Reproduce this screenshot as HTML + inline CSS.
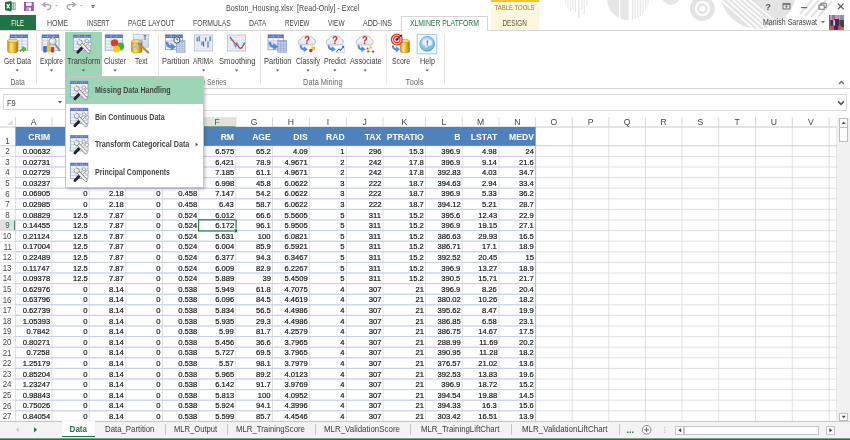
<!DOCTYPE html>
<html lang="en"><head><meta charset="utf-8"><title>Boston_Housing.xlsx [Read-Only] - Excel</title>
<style>
html,body{margin:0;padding:0;}
body{width:850px;height:440px;overflow:hidden;background:#fff;position:relative;font-family:"Liberation Sans",sans-serif;}
#root{position:absolute;left:0;top:0;width:850px;height:440px;overflow:hidden;will-change:transform;}
.t{position:absolute;white-space:pre;display:block;}
.b{position:absolute;box-sizing:border-box;}
svg{position:absolute;overflow:visible;}
</style></head><body><div id="root">
<svg style="left:540px;top:0" width="310" height="30" viewBox="540 0 310 30">
<defs><clipPath id="semi"><circle cx="628" cy="-1" r="21"/></clipPath><clipPath id="bigc"><circle cx="758" cy="-9" r="38"/></clipPath></defs>
<g fill="#e6e6e6" stroke="none">
<rect x="565.2" y="0" width="1" height="4"/><rect x="567.6" y="0" width="1" height="7.5"/><rect x="570" y="0" width="1.1" height="11.5"/>
<rect x="572.4" y="0" width="1.1" height="9"/><rect x="574.8" y="0" width="1.2" height="12.5"/><rect x="578" y="0" width="1.4" height="17.5"/>
<rect x="581" y="0" width="1.2" height="10"/><rect x="583.6" y="0" width="1.2" height="14"/><rect x="586.4" y="0" width="1" height="6"/>
<g clip-path="url(#semi)">
<path d="M594 0 L599.6 0 L607.2 9 L607.2 0 L619 0 L619 22 L606 22 L594 8 Z"/>
<rect x="620.4" y="0" width="8.2" height="22"/>
<rect x="632" y="0" width="1.3" height="22"/><rect x="634.6" y="0" width="1.3" height="22"/><rect x="637.2" y="0" width="1.3" height="22"/><rect x="639.8" y="0" width="1.3" height="22"/>
<rect x="642.4" y="0" width="1.3" height="22"/><rect x="645" y="0" width="1.3" height="22"/><rect x="647.6" y="0" width="1.3" height="22"/>
</g>
<circle cx="671" cy="-4" r="9"/>
</g>
<g fill="none" stroke="#e4e4e4">
<circle cx="702.4" cy="8.6" r="10" stroke-width="4.8"/>
<circle cx="702.4" cy="8.6" r="4.2" stroke-width="2.6"/>
</g>
<g clip-path="url(#bigc)">
<rect x="715" y="0" width="90" height="30" fill="#e4e4e4"/>
<g stroke="#fff" stroke-width="1.5" fill="none">
<path d="M721 0 L757 32"/><path d="M725 -2 L763 32"/><path d="M729.5 -3 L769 32"/><path d="M734.5 -3 L775 32"/><path d="M740 -3 L781 32"/><path d="M746 -3 L787 31"/>
</g>
</g>
<g stroke="#e4e4e4" stroke-width="2" fill="none">
<path d="M800 14 L812 0"/><path d="M805 16 L819 0"/><path d="M811 17 L826 0"/><path d="M818 17 L832 1"/>
</g>
</svg>
<svg style="left:5.2px;top:0.8px" width="11" height="10.4" viewBox="0 0 11 10.4">
<rect x="5.6" y="1.5" width="5" height="7.2" fill="#5f9d7a"/>
<rect x="7.3" y="2.4" width="0.9" height="5.4" fill="#e7f1eb"/><rect x="9" y="2.4" width="0.9" height="5.4" fill="#e7f1eb"/>
<path d="M0 1.1 L6.5 0 L6.5 10.4 L0 9.3 Z" fill="#1e6f42"/>
<path d="M1.7 3.2 L4.7 7.3 M4.7 3.2 L1.7 7.3" stroke="#fff" stroke-width="1.15" fill="none"/>
</svg>
<svg style="left:24px;top:2px" width="10" height="9" viewBox="0 0 10 9">
<rect x="0.3" y="0.3" width="9" height="8.4" fill="#9559b8" stroke="#7e3f9f" stroke-width="0.6"/>
<rect x="2" y="0.6" width="5.6" height="3.2" fill="#fff"/>
<rect x="2.6" y="5.6" width="4.4" height="3" fill="#fff"/><rect x="3.4" y="6.2" width="1.2" height="2.4" fill="#7e3f9f"/>
</svg>
<svg style="left:41px;top:1px" width="60" height="11" viewBox="41 1 60 11">
<g fill="none" stroke="#a6a6a6" stroke-width="1.35">
<path d="M43 4.6 L48 4.6 Q51 4.8 50.8 7 Q50.4 9.4 47.2 9.6"/><path d="M45.4 2.2 L42.6 4.6 L45.6 6.9"/>
<path d="M75 4.6 L70 4.6 Q67 4.8 67.2 7 Q67.6 9.4 70.8 9.6"/><path d="M72.6 2.2 L75.4 4.6 L72.4 6.9"/>
</g>
<path d="M55 5 L57.8 5 L56.4 6.6 Z" fill="#b0b0b0"/><path d="M80 4.9 L82.8 4.9 L81.4 6.5 Z" fill="#b0b0b0"/>
<rect x="91.3" y="5" width="3.4" height="0.8" fill="#555"/><path d="M91.2 6.5 L94.8 6.5 L93 8.2 Z" fill="#555"/>
</svg>
<span class="t" style="left:225.80px;top:2.76px;font-size:8.4px;line-height:10.08px;color:#4a4a4a;transform:scaleX(0.8581);transform-origin:0 50%;">Boston_Housing.xlsx  [Read-Only] - Excel</span>
<span class="t" style="left:765.13px;top:1.06px;font-size:9.4px;line-height:11.28px;color:#555;font-weight:700;">?</span>
<svg style="left:780px;top:0" width="70" height="14" viewBox="780 0 70 14">
<g fill="none" stroke="#666" stroke-width="0.9">
<rect x="783" y="3.4" width="7" height="5.6"/><path d="M783 4.6 L790 4.6"/><path d="M786.5 8 L786.5 5.6 M785.3 6.8 L786.5 5.6 L787.7 6.8" stroke-width="0.7"/>
<path d="M801.2 7.6 L807.2 7.6" stroke-width="1.2"/>
<rect x="819" y="5" width="5.2" height="4.2"/><path d="M820.8 5 L820.8 3.2 L826.2 3.2 L826.2 7.4 L824.2 7.4"/>
<path d="M837.8 3.6 L843.6 9.2 M843.6 3.6 L837.8 9.2" stroke-width="1.2" stroke="#5a5a5a"/>
</g></svg>
<div class="b" style="left:0.00px;top:15.00px;width:36.00px;height:15.60px;background:#217346;"></div>
<span class="t" style="left:9.34px;top:18.58px;font-size:8.2px;line-height:9.84px;color:#fff;transform:scaleX(0.7276);transform-origin:50% 50%;">FILE</span>
<span class="t" style="left:47.00px;top:18.58px;font-size:8.2px;line-height:9.84px;color:#444;transform:scaleX(0.8537);transform-origin:0 50%;">HOME</span>
<span class="t" style="left:86.80px;top:18.58px;font-size:8.2px;line-height:9.84px;color:#444;transform:scaleX(0.7520);transform-origin:0 50%;">INSERT</span>
<span class="t" style="left:127.50px;top:18.58px;font-size:8.2px;line-height:9.84px;color:#444;transform:scaleX(0.8260);transform-origin:0 50%;">PAGE LAYOUT</span>
<span class="t" style="left:192.50px;top:18.58px;font-size:8.2px;line-height:9.84px;color:#444;transform:scaleX(0.8297);transform-origin:0 50%;">FORMULAS</span>
<span class="t" style="left:248.80px;top:18.58px;font-size:8.2px;line-height:9.84px;color:#444;transform:scaleX(0.8474);transform-origin:0 50%;">DATA</span>
<span class="t" style="left:284.50px;top:18.58px;font-size:8.2px;line-height:9.84px;color:#444;transform:scaleX(0.7574);transform-origin:0 50%;">REVIEW</span>
<span class="t" style="left:327.50px;top:18.58px;font-size:8.2px;line-height:9.84px;color:#444;transform:scaleX(0.7873);transform-origin:0 50%;">VIEW</span>
<span class="t" style="left:362.50px;top:18.58px;font-size:8.2px;line-height:9.84px;color:#444;transform:scaleX(0.8602);transform-origin:0 50%;">ADD-INS</span>
<div class="b" style="left:0.00px;top:30.20px;width:850.00px;height:1.00px;background:#d6d6d6;"></div>
<div class="b" style="left:490.80px;top:0.00px;width:47.80px;height:30.20px;background:#fdf7e0;"></div>
<div class="b" style="left:490.80px;top:0.00px;width:47.80px;height:2.00px;background:#f3c42f;"></div>
<span class="t" style="left:489.14px;top:3.04px;font-size:7.6px;line-height:9.12px;color:#9a7a1c;transform:scaleX(0.7826);transform-origin:50% 50%;">TABLE TOOLS</span>
<span class="t" style="left:498.58px;top:18.58px;font-size:8.2px;line-height:9.84px;color:#5a5336;transform:scaleX(0.7793);transform-origin:50% 50%;">DESIGN</span>
<div class="b" style="left:401.00px;top:15.60px;width:87.00px;height:15.80px;background:#fff;border:1px solid #d6d6d6;border-bottom:none;"></div>
<span class="t" style="left:410.00px;top:18.58px;font-size:8.2px;line-height:9.84px;color:#217346;transform:scaleX(0.8336);transform-origin:0 50%;">XLMINER PLATFORM</span>
<span class="t" style="left:762.70px;top:17.16px;font-size:8.4px;line-height:10.08px;color:#444;transform:scaleX(0.8413);transform-origin:0 50%;">Manish Saraswat</span>
<svg style="left:820px;top:20px" width="6" height="5" viewBox="0 0 6 5"><path d="M1 1 L5 1 L3 3.4 Z" fill="#777"/></svg>
<svg style="left:829px;top:14.8px;overflow:hidden" width="15" height="15" viewBox="0 0 15 15">
<defs><filter id="avb" x="-10%" y="-10%" width="120%" height="120%"><feGaussianBlur stdDeviation="0.45"/></filter></defs>
<rect width="15" height="15" fill="#a98aa2"/>
<g filter="url(#avb)">
<rect x="-1" y="-1" width="17" height="6" fill="#c39ab6"/>
<rect x="3" y="0" width="3" height="4.5" fill="#9a6f9a"/><rect x="7" y="0.5" width="3" height="3.5" fill="#d58aa8"/>
<rect x="11" y="-1" width="5" height="6" fill="#8f93ab"/>
<rect x="-1" y="-1" width="2" height="17" fill="#4f7f3c"/>
<rect x="1.4" y="5" width="3.4" height="6.5" fill="#3a3142"/>
<rect x="5" y="4" width="5" height="12" fill="#43256c"/>
<rect x="4.4" y="5.2" width="1.4" height="5.4" fill="#f6f2f6"/>
<rect x="10.4" y="5" width="5" height="7.5" fill="#3c4a3c"/>
<rect x="1.6" y="10.6" width="3.4" height="5" fill="#d6503a"/>
<rect x="9.2" y="10.6" width="2.8" height="5" fill="#d6503a"/>
<rect x="12" y="12" width="4" height="4" fill="#8a7f88"/>
</g>
</svg>
<div class="b" style="left:65.30px;top:32.00px;width:36.80px;height:43.60px;background:#9fd5b7;"></div>
<div class="b" style="left:0.00px;top:87.60px;width:850.00px;height:1.00px;background:#d6d6d6;"></div>
<div class="b" style="left:35.60px;top:33.50px;width:1.00px;height:50.50px;background:#e5e5e5;"></div>
<div class="b" style="left:157.80px;top:33.50px;width:1.00px;height:50.50px;background:#e5e5e5;"></div>
<div class="b" style="left:260.30px;top:33.50px;width:1.00px;height:50.50px;background:#e5e5e5;"></div>
<div class="b" style="left:385.50px;top:33.50px;width:1.00px;height:50.50px;background:#e5e5e5;"></div>
<div class="b" style="left:443.80px;top:33.50px;width:1.00px;height:50.50px;background:#e5e5e5;"></div>
<svg style="left:0;top:31px" width="460" height="60" viewBox="0 31 460 60"><defs><linearGradient id="gold" x1="0" x2="1" y1="0" y2="0"><stop offset="0" stop-color="#c98e12"/><stop offset="0.35" stop-color="#ffe680"/><stop offset="0.7" stop-color="#e2a91c"/><stop offset="1" stop-color="#a8740a"/></linearGradient><linearGradient id="cloudg" x1="0" x2="0" y1="0" y2="1"><stop offset="0" stop-color="#ffffff"/><stop offset="1" stop-color="#dfe3ea"/></linearGradient><linearGradient id="pageg" x1="0" x2="1" y1="0" y2="1"><stop offset="0" stop-color="#eef3fa"/><stop offset="1" stop-color="#c6d4e8"/></linearGradient><radialGradient id="lens" cx="0.4" cy="0.35" r="0.7"><stop offset="0" stop-color="#ffffff"/><stop offset="1" stop-color="#a9cdf0"/></radialGradient><radialGradient id="helpg" cx="0.4" cy="0.3" r="0.8"><stop offset="0" stop-color="#cfe8f8"/><stop offset="1" stop-color="#63a9dc"/></radialGradient></defs><rect x="10" y="34.8" width="17.8" height="15.4" fill="#f0f4fb" stroke="#7d93c4" stroke-width="0.7"/><rect x="10" y="34.8" width="17.8" height="3.2" fill="#5570bd"/><path d="M11 36.40 L26.8 36.40" stroke="#a9b8e2" stroke-width="0.7" stroke-dasharray="1.4 0.7"/><path d="M15.93 34.8 L15.93 50.199999999999996" stroke="#aabbdc" stroke-width="0.6"/><path d="M21.87 34.8 L21.87 50.199999999999996" stroke="#aabbdc" stroke-width="0.6"/><path d="M10 41.05 L27.8 41.05" stroke="#aabbdc" stroke-width="0.6"/><path d="M10 44.10 L27.8 44.10" stroke="#aabbdc" stroke-width="0.6"/><path d="M10 47.15 L27.8 47.15" stroke="#aabbdc" stroke-width="0.6"/><path d="M7.6 40.768 L7.6 51.232 A5.2 1.7680000000000002 0 0 0 18.0 51.232 L18.0 40.768 Z" fill="url(#gold)" stroke="#b07d10" stroke-width="0.5"/><ellipse cx="12.8" cy="40.768" rx="5.2" ry="1.7680000000000002" fill="#f7dc7a" stroke="#b07d10" stroke-width="0.5"/><path d="M20 52 Q20.4 48.6 23 48.4 L22.6 46.4 L26.4 48.8 L23.6 51.8 L23.4 50 Q21.4 50 20 52 Z" fill="#4fc22c" stroke="#2f8f17" stroke-width="0.4"/><rect x="42" y="34.8" width="17" height="15.4" fill="#f0f4fb" stroke="#7d93c4" stroke-width="0.7"/><rect x="42" y="34.8" width="17" height="3.2" fill="#5570bd"/><path d="M43 36.40 L58 36.40" stroke="#a9b8e2" stroke-width="0.7" stroke-dasharray="1.4 0.7"/><path d="M47.67 34.8 L47.67 50.199999999999996" stroke="#aabbdc" stroke-width="0.6"/><path d="M53.33 34.8 L53.33 50.199999999999996" stroke="#aabbdc" stroke-width="0.6"/><path d="M42 41.05 L59 41.05" stroke="#aabbdc" stroke-width="0.6"/><path d="M42 44.10 L59 44.10" stroke="#aabbdc" stroke-width="0.6"/><path d="M42 47.15 L59 47.15" stroke="#aabbdc" stroke-width="0.6"/><rect x="43.2" y="46" width="3.6" height="6.6" rx="0.8" fill="#3f6fc9"/><rect x="47" y="42.4" width="3.6" height="10.2" rx="0.8" fill="#f0c21c"/><rect x="50.8" y="47" width="3.4" height="5.6" rx="0.8" fill="#d4362c"/><path d="M55 44.4 L59.8 50.6" stroke="#8c8c8c" stroke-width="1.8" stroke-linecap="round"/><circle cx="52.6" cy="41.4" r="3.6" fill="url(#lens)" stroke="#9a9a9a" stroke-width="0.9"/><rect x="73.3" y="35" width="17.5" height="15.4" fill="#f0f4fb" stroke="#7d93c4" stroke-width="0.7"/><rect x="73.3" y="35" width="17.5" height="2.8" fill="#5570bd"/><path d="M74.3 36.40 L89.8 36.40" stroke="#a9b8e2" stroke-width="0.7" stroke-dasharray="1.4 0.7"/><path d="M79.13 35 L79.13 50.4" stroke="#aabbdc" stroke-width="0.6"/><path d="M84.97 35 L84.97 50.4" stroke="#aabbdc" stroke-width="0.6"/><path d="M73.3 40.95 L90.8 40.95" stroke="#aabbdc" stroke-width="0.6"/><path d="M73.3 44.10 L90.8 44.10" stroke="#aabbdc" stroke-width="0.6"/><path d="M73.3 47.25 L90.8 47.25" stroke="#aabbdc" stroke-width="0.6"/><g transform="translate(74.2 36.5) scale(1.0)"><path d="M13.6 5.6 L7 12.2" stroke="#8a8a8a" stroke-width="3" stroke-linecap="round"/><path d="M13.6 5.6 L7 12.2" stroke="#f4f4f4" stroke-width="1.9" stroke-linecap="round"/><path d="M7.4 11.8 L3.6 15.8" stroke="#222" stroke-width="2.8" stroke-linecap="round"/><path d="M6 6.4 L14.6 15.4" stroke="#777" stroke-width="3.4" stroke-linecap="round"/><path d="M6 6.4 L14.6 15.4" stroke="#f1f1f1" stroke-width="2.2" stroke-linecap="round"/><circle cx="5.4" cy="5.8" r="2.5" fill="#f1f1f1" stroke="#777" stroke-width="0.7"/><path d="M3.2 3.4 L5.6 5.8" stroke="#dfe6f3" stroke-width="1.6"/><circle cx="15.6" cy="7.6" r="1.7" fill="#f4f4f4" stroke="#888" stroke-width="0.6"/><circle cx="12.6" cy="4.4" r="1.6" fill="#f4f4f4" stroke="#888" stroke-width="0.6"/></g><rect x="105.2" y="34.8" width="17.6" height="15.4" fill="#f0f4fb" stroke="#7d93c4" stroke-width="0.7"/><rect x="105.2" y="34.8" width="17.6" height="3.2" fill="#5570bd"/><path d="M106.2 36.40 L121.80000000000001 36.40" stroke="#a9b8e2" stroke-width="0.7" stroke-dasharray="1.4 0.7"/><path d="M111.07 34.8 L111.07 50.199999999999996" stroke="#aabbdc" stroke-width="0.6"/><path d="M116.93 34.8 L116.93 50.199999999999996" stroke="#aabbdc" stroke-width="0.6"/><path d="M105.2 41.05 L122.80000000000001 41.05" stroke="#aabbdc" stroke-width="0.6"/><path d="M105.2 44.10 L122.80000000000001 44.10" stroke="#aabbdc" stroke-width="0.6"/><path d="M105.2 47.15 L122.80000000000001 47.15" stroke="#aabbdc" stroke-width="0.6"/><circle cx="114.6" cy="43" r="3.7" fill="#e23a24"/><circle cx="120.6" cy="46.2" r="3.6" fill="#3fb42c"/><circle cx="116.4" cy="49" r="3.5" fill="#f2cd1e"/><rect x="133.2" y="34.2" width="15.6" height="13" fill="url(#pageg)" stroke="#a3b4cd" stroke-width="0.6"/><path d="M143.6 35.6 L146.4 35.6 M145 35.6 L145 40" stroke="#555" stroke-width="0.8"/><path d="M131.5 41.402 L131.5 51.198 A5.3 1.802 0 0 0 142.1 51.198 L142.1 41.402 Z" fill="url(#gold)" stroke="#b07d10" stroke-width="0.5"/><ellipse cx="136.8" cy="41.402" rx="5.3" ry="1.802" fill="#f7dc7a" stroke="#b07d10" stroke-width="0.5"/><path d="M134.4 48 Q135.4 42 142.8 39.4 Q139 43.6 137.4 48.4 Z" fill="#a9c6ea" stroke="#7f9fca" stroke-width="0.4"/><path d="M138.8 43.8 L148.2 52.6" stroke="#b87a2a" stroke-width="2.1" stroke-linecap="round"/><path d="M138.8 43.8 L148.2 52.6" stroke="#e0b066" stroke-width="0.7" stroke-dasharray="0.8 0.8"/><rect x="165.4" y="34.8" width="17.2" height="14.8" fill="#f0f4fb" stroke="#7d93c4" stroke-width="0.7"/><rect x="165.4" y="34.8" width="17.2" height="3.2" fill="#5570bd"/><path d="M166.4 36.40 L181.6 36.40" stroke="#a9b8e2" stroke-width="0.7" stroke-dasharray="1.4 0.7"/><path d="M171.13 34.8 L171.13 49.599999999999994" stroke="#aabbdc" stroke-width="0.6"/><path d="M176.87 34.8 L176.87 49.599999999999994" stroke="#aabbdc" stroke-width="0.6"/><path d="M165.4 40.90 L182.6 40.90" stroke="#aabbdc" stroke-width="0.6"/><path d="M165.4 43.80 L182.6 43.80" stroke="#aabbdc" stroke-width="0.6"/><path d="M165.4 46.70 L182.6 46.70" stroke="#aabbdc" stroke-width="0.6"/><rect x="176.4" y="40.8" width="8.6" height="11.4" fill="#dbe2f0" stroke="#7d93c4" stroke-width="0.7"/><rect x="176.4" y="40.8" width="8.6" height="1.6" fill="#9fb0d6"/><path d="M179.27 40.8 L179.27 52.199999999999996" stroke="#93a4ca" stroke-width="0.6"/><path d="M182.13 40.8 L182.13 52.199999999999996" stroke="#93a4ca" stroke-width="0.6"/><path d="M176.4 44.36 L185.0 44.36" stroke="#93a4ca" stroke-width="0.6"/><path d="M176.4 46.32 L185.0 46.32" stroke="#93a4ca" stroke-width="0.6"/><path d="M176.4 48.28 L185.0 48.28" stroke="#93a4ca" stroke-width="0.6"/><path d="M176.4 50.24 L185.0 50.24" stroke="#93a4ca" stroke-width="0.6"/><circle cx="176.9" cy="40" r="3.1" fill="#eef1f7" stroke="#4a5570" stroke-width="1"/><path d="M176.9 38.2 L176.9 40 L178.2 40" stroke="#222" stroke-width="0.7" fill="none"/><g transform="translate(166.4 41.8) scale(1.15)"><path d="M0.6 0 Q0.4 4.4 4.4 4.4" fill="none" stroke="#528ce4" stroke-width="2.4"/><path d="M3.8 1 L8.4 4.4 L3.8 7.8 Z" fill="#528ce4"/></g><rect x="194.6" y="35" width="18" height="16" fill="#eef2f8" stroke="#a9b5c9" stroke-width="0.7"/><path d="M197.6 35 L197.6 51 M194.6 37.67 L212.6 37.67" stroke="#cfd6e3" stroke-width="0.4"/><path d="M200.6 35 L200.6 51 M194.6 40.34 L212.6 40.34" stroke="#cfd6e3" stroke-width="0.4"/><path d="M203.6 35 L203.6 51 M194.6 43.01 L212.6 43.01" stroke="#cfd6e3" stroke-width="0.4"/><path d="M206.6 35 L206.6 51 M194.6 45.68 L212.6 45.68" stroke="#cfd6e3" stroke-width="0.4"/><path d="M209.6 35 L209.6 51 M194.6 48.35 L212.6 48.35" stroke="#cfd6e3" stroke-width="0.4"/><rect x="196.6" y="37.4" width="1.2" height="4.0" fill="#3f78c4"/><rect x="198.6" y="36.2" width="1.2" height="5.2" fill="#3f78c4"/><rect x="201.4" y="41.4" width="1.2" height="4.0" fill="#3f78c4"/><rect x="203" y="41.4" width="1.2" height="5.2" fill="#3f78c4"/><rect x="205" y="37.6" width="1.2" height="3.8" fill="#3f78c4"/><rect x="207.4" y="41.4" width="1.2" height="6.2" fill="#3f78c4"/><rect x="209.6" y="36.4" width="1.2" height="5.0" fill="#3f78c4"/><rect x="227.4" y="35" width="18" height="16" fill="#eef2f8" stroke="#a9b5c9" stroke-width="0.7"/><path d="M230.4 35 L230.4 51 M227.4 37.67 L245.4 37.67" stroke="#cfd6e3" stroke-width="0.4"/><path d="M233.4 35 L233.4 51 M227.4 40.34 L245.4 40.34" stroke="#cfd6e3" stroke-width="0.4"/><path d="M236.4 35 L236.4 51 M227.4 43.01 L245.4 43.01" stroke="#cfd6e3" stroke-width="0.4"/><path d="M239.4 35 L239.4 51 M227.4 45.68 L245.4 45.68" stroke="#cfd6e3" stroke-width="0.4"/><path d="M242.4 35 L242.4 51 M227.4 48.35 L245.4 48.35" stroke="#cfd6e3" stroke-width="0.4"/><path d="M229.8 36.6 L231.6 40 L233.4 41.4 L235.6 46.8 L237 42.8 L239 47.6 L241.6 48 L244.6 42.4" fill="none" stroke="#6aa0dc" stroke-width="1.4"/><path d="M230 36.9 L235 43 L240.5 49 L245.2 43.2" fill="none" stroke="#d6302a" stroke-width="1"/><rect x="268" y="34.8" width="15.6" height="15" fill="#f0f4fb" stroke="#7d93c4" stroke-width="0.7"/><rect x="268" y="34.8" width="15.6" height="3.2" fill="#5570bd"/><path d="M269 36.40 L282.6 36.40" stroke="#a9b8e2" stroke-width="0.7" stroke-dasharray="1.4 0.7"/><path d="M273.20 34.8 L273.20 49.8" stroke="#aabbdc" stroke-width="0.6"/><path d="M278.40 34.8 L278.40 49.8" stroke="#aabbdc" stroke-width="0.6"/><path d="M268 40.95 L283.6 40.95" stroke="#aabbdc" stroke-width="0.6"/><path d="M268 43.90 L283.6 43.90" stroke="#aabbdc" stroke-width="0.6"/><path d="M268 46.85 L283.6 46.85" stroke="#aabbdc" stroke-width="0.6"/><rect x="277.8" y="40.6" width="8.8" height="11.6" fill="#d3dcee" stroke="#7d93c4" stroke-width="0.7"/><rect x="277.8" y="40.6" width="8.8" height="1.6" fill="#9fb0d6"/><path d="M280.73 40.6 L280.73 52.2" stroke="#8194c2" stroke-width="0.6"/><path d="M283.67 40.6 L283.67 52.2" stroke="#8194c2" stroke-width="0.6"/><path d="M277.8 44.20 L286.6 44.20" stroke="#8194c2" stroke-width="0.6"/><path d="M277.8 46.20 L286.6 46.20" stroke="#8194c2" stroke-width="0.6"/><path d="M277.8 48.20 L286.6 48.20" stroke="#8194c2" stroke-width="0.6"/><path d="M277.8 50.20 L286.6 50.20" stroke="#8194c2" stroke-width="0.6"/><g transform="translate(269.2 41.8) scale(1.1)"><path d="M0.6 0 Q0.4 4.4 4.4 4.4" fill="none" stroke="#528ce4" stroke-width="2.4"/><path d="M3.8 1 L8.4 4.4 L3.8 7.8 Z" fill="#528ce4"/></g><g transform="translate(297.6 34.6)"><path d="M4 10.4 Q0.4 10.4 0.5 7.4 Q0.6 4.8 3.4 4.6 Q3.8 1.6 7 1.4 Q9 0 11.4 1.4 Q14.6 1 15.4 4.2 Q18.2 4.8 17.8 7.8 Q17.4 10.4 14.4 10.4 Z" fill="url(#cloudg)" stroke="#aab1bf" stroke-width="0.7"/><text x="9.3" y="9.4" font-size="11.6" font-weight="700" fill="#d8262c" text-anchor="middle" font-family="Liberation Sans, sans-serif" transform="translate(9.3 0) scale(0.85 1) translate(-9.3 0)">?</text></g><g transform="translate(300.2 45.2) scale(0.9)"><path d="M0.6 0 Q0.4 4.4 4.4 4.4" fill="none" stroke="#528ce4" stroke-width="2.4"/><path d="M3.8 1 L8.4 4.4 L3.8 7.8 Z" fill="#528ce4"/></g><rect x="311.4" y="46.4" width="3.6" height="3.6" fill="#f0c81e"/><circle cx="310.8" cy="50.6" r="1.8" fill="#d8342a"/><g transform="translate(325.6 34.6)"><path d="M4 10.4 Q0.4 10.4 0.5 7.4 Q0.6 4.8 3.4 4.6 Q3.8 1.6 7 1.4 Q9 0 11.4 1.4 Q14.6 1 15.4 4.2 Q18.2 4.8 17.8 7.8 Q17.4 10.4 14.4 10.4 Z" fill="url(#cloudg)" stroke="#aab1bf" stroke-width="0.7"/><text x="9.3" y="9.4" font-size="11.6" font-weight="700" fill="#d8262c" text-anchor="middle" font-family="Liberation Sans, sans-serif" transform="translate(9.3 0) scale(0.85 1) translate(-9.3 0)">?</text></g><g transform="translate(328.2 45.2) scale(0.9)"><path d="M0.6 0 Q0.4 4.4 4.4 4.4" fill="none" stroke="#528ce4" stroke-width="2.4"/><path d="M3.8 1 L8.4 4.4 L3.8 7.8 Z" fill="#528ce4"/></g><path d="M336.4 51.8 L339 49 L340.6 50.4 L343.4 46.6" fill="none" stroke="#3a6fd0" stroke-width="1.1"/><path d="M341.6 46 L344.2 45.6 L343.8 48.4 Z" fill="#3a6fd0"/><path d="M336 52.4 L344.6 52.4 L344.6 47" stroke="#b8b8b8" stroke-width="0.5" fill="none"/><g transform="translate(355.4 34.6)"><path d="M4 10.4 Q0.4 10.4 0.5 7.4 Q0.6 4.8 3.4 4.6 Q3.8 1.6 7 1.4 Q9 0 11.4 1.4 Q14.6 1 15.4 4.2 Q18.2 4.8 17.8 7.8 Q17.4 10.4 14.4 10.4 Z" fill="url(#cloudg)" stroke="#aab1bf" stroke-width="0.7"/><text x="9.3" y="9.4" font-size="11.6" font-weight="700" fill="#d8262c" text-anchor="middle" font-family="Liberation Sans, sans-serif" transform="translate(9.3 0) scale(0.85 1) translate(-9.3 0)">?</text></g><g transform="translate(358 45.2) scale(0.9)"><path d="M0.6 0 Q0.4 4.4 4.4 4.4" fill="none" stroke="#528ce4" stroke-width="2.4"/><path d="M3.8 1 L8.4 4.4 L3.8 7.8 Z" fill="#528ce4"/></g><path d="M370.6 47.2 L368.4 51.4 L373.2 51.6 Z" fill="none" stroke="#aaa" stroke-width="0.5"/><circle cx="370.6" cy="47" r="1.2" fill="#f0c81e"/><circle cx="368.2" cy="51.4" r="1.2" fill="#3fb42c"/><circle cx="373.2" cy="51.6" r="1.2" fill="#c43ac0"/><circle cx="367.6" cy="48.4" r="1" fill="#d8342a"/><path d="M400.2 40.998 L400.2 51.202 A4.7 1.598 0 0 0 409.59999999999997 51.202 L409.59999999999997 40.998 Z" fill="url(#gold)" stroke="#b07d10" stroke-width="0.5"/><ellipse cx="404.9" cy="40.998" rx="4.7" ry="1.598" fill="#f7dc7a" stroke="#b07d10" stroke-width="0.5"/><circle cx="396.8" cy="39.6" r="5.4" fill="#fbd5d0" stroke="#d8342a" stroke-width="1.2"/><circle cx="396.8" cy="39.6" r="3.2" fill="#fbe3df" stroke="#d8342a" stroke-width="1.1"/><circle cx="396.8" cy="39.6" r="1.4" fill="#d8342a"/><path d="M396.6 39.8 L401.6 35" stroke="#222" stroke-width="1"/><path d="M396 40.4 L398.8 39.6 L397 37.8 Z" fill="#111"/><path d="M400.4 36 L402.4 34.4 L402 36.6 Z" fill="#111"/><g transform="translate(392.4 45.4) scale(0.9)"><path d="M0.6 0 Q0.4 4.4 4.4 4.4" fill="none" stroke="#528ce4" stroke-width="2.4"/><path d="M3.8 1 L8.4 4.4 L3.8 7.8 Z" fill="#528ce4"/></g><rect x="417.2" y="34.4" width="19.6" height="19.4" rx="1" fill="#f4f9fe" stroke="#8db4dc" stroke-width="0.8"/><circle cx="427.2" cy="43.8" r="7.4" fill="url(#helpg)" stroke="#3f84bd" stroke-width="0.6"/><path d="M422.4 42.6 Q422.4 39.4 427.4 39.4 Q432.4 39.4 432.4 42.8 Q432.4 46 427.8 46 L425 48.4 L425.4 45.8 Q422.4 45.2 422.4 42.6 Z" fill="#e8f3fb" opacity="0.9"/><rect x="426.8" y="40.4" width="1.2" height="3.2" fill="#3f84bd"/><rect x="426.8" y="44.2" width="1.2" height="1.1" fill="#3f84bd"/><path d="M15.5 69.6 L18.9 69.6 L17.2 71.6 Z" fill="#555"/><path d="M49.699999999999996 69.6 L53.1 69.6 L51.4 71.6 Z" fill="#555"/><path d="M81.7 69.6 L85.10000000000001 69.6 L83.4 71.6 Z" fill="#555"/><path d="M113.3 69.6 L116.7 69.6 L115 71.6 Z" fill="#555"/><path d="M202.0 69.6 L205.39999999999998 69.6 L203.7 71.6 Z" fill="#555"/><path d="M234.9 69.6 L238.29999999999998 69.6 L236.6 71.6 Z" fill="#555"/><path d="M275.90000000000003 69.6 L279.3 69.6 L277.6 71.6 Z" fill="#555"/><path d="M306.3 69.6 L309.7 69.6 L308 71.6 Z" fill="#555"/><path d="M333.1 69.6 L336.5 69.6 L334.8 71.6 Z" fill="#555"/><path d="M363.5 69.6 L366.9 69.6 L365.2 71.6 Z" fill="#555"/><path d="M425.5 69.6 L428.9 69.6 L427.2 71.6 Z" fill="#555"/></svg>
<span class="t" style="left:4.00px;top:55.72px;font-size:8.8px;line-height:10.56px;color:#3c3c3c;transform:scaleX(0.7667);transform-origin:0 50%;">Get Data</span>
<span class="t" style="left:40.00px;top:55.72px;font-size:8.8px;line-height:10.56px;color:#3c3c3c;transform:scaleX(0.7708);transform-origin:0 50%;">Explore</span>
<span class="t" style="left:66.60px;top:55.72px;font-size:8.8px;line-height:10.56px;color:#3c3c3c;transform:scaleX(0.8399);transform-origin:0 50%;">Transform</span>
<span class="t" style="left:104.00px;top:55.72px;font-size:8.8px;line-height:10.56px;color:#3c3c3c;transform:scaleX(0.7893);transform-origin:0 50%;">Cluster</span>
<span class="t" style="left:135.00px;top:55.72px;font-size:8.8px;line-height:10.56px;color:#3c3c3c;transform:scaleX(0.7745);transform-origin:0 50%;">Text</span>
<span class="t" style="left:161.50px;top:55.72px;font-size:8.8px;line-height:10.56px;color:#3c3c3c;transform:scaleX(0.8519);transform-origin:0 50%;">Partition</span>
<span class="t" style="left:193.00px;top:55.72px;font-size:8.8px;line-height:10.56px;color:#3c3c3c;transform:scaleX(0.7356);transform-origin:0 50%;">ARIMA</span>
<span class="t" style="left:218.50px;top:55.72px;font-size:8.8px;line-height:10.56px;color:#3c3c3c;transform:scaleX(0.8676);transform-origin:0 50%;">Smoothing</span>
<span class="t" style="left:264.00px;top:55.72px;font-size:8.8px;line-height:10.56px;color:#3c3c3c;transform:scaleX(0.8519);transform-origin:0 50%;">Partition</span>
<span class="t" style="left:296.00px;top:55.72px;font-size:8.8px;line-height:10.56px;color:#3c3c3c;transform:scaleX(0.7791);transform-origin:0 50%;">Classify</span>
<span class="t" style="left:324.00px;top:55.72px;font-size:8.8px;line-height:10.56px;color:#3c3c3c;transform:scaleX(0.8033);transform-origin:0 50%;">Predict</span>
<span class="t" style="left:349.50px;top:55.72px;font-size:8.8px;line-height:10.56px;color:#3c3c3c;transform:scaleX(0.8256);transform-origin:0 50%;">Associate</span>
<span class="t" style="left:391.50px;top:55.72px;font-size:8.8px;line-height:10.56px;color:#3c3c3c;transform:scaleX(0.7830);transform-origin:0 50%;">Score</span>
<span class="t" style="left:419.50px;top:55.72px;font-size:8.8px;line-height:10.56px;color:#3c3c3c;transform:scaleX(0.8288);transform-origin:0 50%;">Help</span>
<span class="t" style="left:8.74px;top:77.98px;font-size:8.2px;line-height:9.84px;color:#666;transform:scaleX(0.8314);transform-origin:50% 50%;">Data</span>
<span class="t" style="left:71.76px;top:77.98px;font-size:8.2px;line-height:9.84px;color:#666;transform:scaleX(0.9058);transform-origin:50% 50%;">Data Analysis</span>
<span class="t" style="left:182.76px;top:77.98px;font-size:8.2px;line-height:9.84px;color:#666;transform:scaleX(0.8334);transform-origin:100% 50%;">Time Series</span>
<span class="t" style="left:300.52px;top:77.98px;font-size:8.2px;line-height:9.84px;color:#666;transform:scaleX(0.9028);transform-origin:50% 50%;">Data Mining</span>
<span class="t" style="left:405.43px;top:77.98px;font-size:8.2px;line-height:9.84px;color:#666;transform:scaleX(0.9403);transform-origin:50% 50%;">Tools</span>
<svg style="left:837px;top:79px" width="9" height="7" viewBox="0 0 9 7"><path d="M2 5 L4.4 2.4 L6.8 5" fill="none" stroke="#666" stroke-width="1.3"/></svg>
<div class="b" style="left:2.60px;top:94.20px;width:72.00px;height:16.20px;border:1px solid #dadada;background:#fff;"></div>
<span class="t" style="left:6.90px;top:97.82px;font-size:8.8px;line-height:10.56px;color:#444;transform:scaleX(0.8569);transform-origin:0 50%;">F9</span>
<svg style="left:57px;top:100px" width="6" height="5" viewBox="0 0 6 5"><path d="M0.8 1 L5.2 1 L3 3.6 Z" fill="#666"/></svg>
<div class="b" style="left:100.00px;top:94.20px;width:747.20px;height:16.80px;border:1px solid #dadada;background:#fff;"></div>
<svg style="left:836px;top:99px" width="10" height="8" viewBox="0 0 10 8"><path d="M2 2.4 L5 5.4 L8 2.4" fill="none" stroke="#555" stroke-width="1.5"/></svg>
<svg style="left:0;top:0" width="850" height="440" viewBox="0 0 850 440"><rect x="198.8" y="117.2" width="36.89999999999998" height="9.8" fill="#e1e1e1"/><rect x="198.8" y="126.2" width="36.89999999999998" height="1.2" fill="#217346"/><rect x="0" y="220.0" width="15" height="10.6" fill="#e1e1e1"/><rect x="14.2" y="220.0" width="1.1" height="10.6" fill="#217346"/><path d="M15.5 117 L15.5 127.0" stroke="#d0d0d0" stroke-width="0.8"/><path d="M51.9 117 L51.9 127.0" stroke="#d0d0d0" stroke-width="0.8"/><path d="M89.2 117 L89.2 127.0" stroke="#d0d0d0" stroke-width="0.8"/><path d="M125.8 117 L125.8 127.0" stroke="#d0d0d0" stroke-width="0.8"/><path d="M162.4 117 L162.4 127.0" stroke="#d0d0d0" stroke-width="0.8"/><path d="M198.8 117 L198.8 127.0" stroke="#d0d0d0" stroke-width="0.8"/><path d="M235.7 117 L235.7 127.0" stroke="#d0d0d0" stroke-width="0.8"/><path d="M272.5 117 L272.5 127.0" stroke="#d0d0d0" stroke-width="0.8"/><path d="M309.4 117 L309.4 127.0" stroke="#d0d0d0" stroke-width="0.8"/><path d="M346.4 117 L346.4 127.0" stroke="#d0d0d0" stroke-width="0.8"/><path d="M383 117 L383 127.0" stroke="#d0d0d0" stroke-width="0.8"/><path d="M425.5 117 L425.5 127.0" stroke="#d0d0d0" stroke-width="0.8"/><path d="M462.2 117 L462.2 127.0" stroke="#d0d0d0" stroke-width="0.8"/><path d="M499 117 L499 127.0" stroke="#d0d0d0" stroke-width="0.8"/><path d="M535.6 117 L535.6 127.0" stroke="#d0d0d0" stroke-width="0.8"/><path d="M572.2 117 L572.2 127.0" stroke="#d0d0d0" stroke-width="0.8"/><path d="M608.8 117 L608.8 127.0" stroke="#d0d0d0" stroke-width="0.8"/><path d="M645.4 117 L645.4 127.0" stroke="#d0d0d0" stroke-width="0.8"/><path d="M682 117 L682 127.0" stroke="#d0d0d0" stroke-width="0.8"/><path d="M718.7 117 L718.7 127.0" stroke="#d0d0d0" stroke-width="0.8"/><path d="M755.5 117 L755.5 127.0" stroke="#d0d0d0" stroke-width="0.8"/><path d="M792.3 117 L792.3 127.0" stroke="#d0d0d0" stroke-width="0.8"/><path d="M829.2 117 L829.2 127.0" stroke="#d0d0d0" stroke-width="0.8"/><path d="M0 127.0 L837 127.0" stroke="#c2c2c2" stroke-width="0.9"/><path d="M12.6 119.4 L12.6 125 L7 125 Z" fill="#dcdcdc"/><path d="M15.5 127.0 L15.5 421.4" stroke="#d9d9d9" stroke-width="0.8"/><path d="M51.9 127.0 L51.9 421.4" stroke="#d9d9d9" stroke-width="0.8"/><path d="M89.2 127.0 L89.2 421.4" stroke="#d9d9d9" stroke-width="0.8"/><path d="M125.8 127.0 L125.8 421.4" stroke="#d9d9d9" stroke-width="0.8"/><path d="M162.4 127.0 L162.4 421.4" stroke="#d9d9d9" stroke-width="0.8"/><path d="M198.8 127.0 L198.8 421.4" stroke="#d9d9d9" stroke-width="0.8"/><path d="M235.7 127.0 L235.7 421.4" stroke="#d9d9d9" stroke-width="0.8"/><path d="M272.5 127.0 L272.5 421.4" stroke="#d9d9d9" stroke-width="0.8"/><path d="M309.4 127.0 L309.4 421.4" stroke="#d9d9d9" stroke-width="0.8"/><path d="M346.4 127.0 L346.4 421.4" stroke="#d9d9d9" stroke-width="0.8"/><path d="M383 127.0 L383 421.4" stroke="#d9d9d9" stroke-width="0.8"/><path d="M425.5 127.0 L425.5 421.4" stroke="#d9d9d9" stroke-width="0.8"/><path d="M462.2 127.0 L462.2 421.4" stroke="#d9d9d9" stroke-width="0.8"/><path d="M499 127.0 L499 421.4" stroke="#d9d9d9" stroke-width="0.8"/><path d="M535.6 127.0 L535.6 421.4" stroke="#d9d9d9" stroke-width="0.8"/><path d="M572.2 127.0 L572.2 421.4" stroke="#d9d9d9" stroke-width="0.8"/><path d="M608.8 127.0 L608.8 421.4" stroke="#d9d9d9" stroke-width="0.8"/><path d="M645.4 127.0 L645.4 421.4" stroke="#d9d9d9" stroke-width="0.8"/><path d="M682 127.0 L682 421.4" stroke="#d9d9d9" stroke-width="0.8"/><path d="M718.7 127.0 L718.7 421.4" stroke="#d9d9d9" stroke-width="0.8"/><path d="M755.5 127.0 L755.5 421.4" stroke="#d9d9d9" stroke-width="0.8"/><path d="M792.3 127.0 L792.3 421.4" stroke="#d9d9d9" stroke-width="0.8"/><path d="M829.2 127.0 L829.2 421.4" stroke="#d9d9d9" stroke-width="0.8"/><path d="M0 145.8 L837 145.8" stroke="#c8c8c8" stroke-width="0.9"/><path d="M0 156.40 L837 156.40" stroke="#d9d9d9" stroke-width="0.8"/><path d="M0 167.00 L837 167.00" stroke="#d9d9d9" stroke-width="0.8"/><path d="M0 177.60 L837 177.60" stroke="#d9d9d9" stroke-width="0.8"/><path d="M0 188.20 L837 188.20" stroke="#d9d9d9" stroke-width="0.8"/><path d="M0 198.80 L837 198.80" stroke="#d9d9d9" stroke-width="0.8"/><path d="M0 209.40 L837 209.40" stroke="#d9d9d9" stroke-width="0.8"/><path d="M0 220.00 L837 220.00" stroke="#d9d9d9" stroke-width="0.8"/><path d="M0 230.60 L837 230.60" stroke="#d9d9d9" stroke-width="0.8"/><path d="M0 241.20 L837 241.20" stroke="#d9d9d9" stroke-width="0.8"/><path d="M0 251.80 L837 251.80" stroke="#d9d9d9" stroke-width="0.8"/><path d="M0 262.40 L837 262.40" stroke="#d9d9d9" stroke-width="0.8"/><path d="M0 273.00 L837 273.00" stroke="#d9d9d9" stroke-width="0.8"/><path d="M0 283.60 L837 283.60" stroke="#d9d9d9" stroke-width="0.8"/><path d="M0 294.20 L837 294.20" stroke="#d9d9d9" stroke-width="0.8"/><path d="M0 304.80 L837 304.80" stroke="#d9d9d9" stroke-width="0.8"/><path d="M0 315.40 L837 315.40" stroke="#d9d9d9" stroke-width="0.8"/><path d="M0 326.00 L837 326.00" stroke="#d9d9d9" stroke-width="0.8"/><path d="M0 336.60 L837 336.60" stroke="#d9d9d9" stroke-width="0.8"/><path d="M0 347.20 L837 347.20" stroke="#d9d9d9" stroke-width="0.8"/><path d="M0 357.80 L837 357.80" stroke="#d9d9d9" stroke-width="0.8"/><path d="M0 368.40 L837 368.40" stroke="#d9d9d9" stroke-width="0.8"/><path d="M0 379.00 L837 379.00" stroke="#d9d9d9" stroke-width="0.8"/><path d="M0 389.60 L837 389.60" stroke="#d9d9d9" stroke-width="0.8"/><path d="M0 400.20 L837 400.20" stroke="#d9d9d9" stroke-width="0.8"/><path d="M0 410.80 L837 410.80" stroke="#d9d9d9" stroke-width="0.8"/><path d="M0 421.40 L837 421.40" stroke="#d9d9d9" stroke-width="0.8"/><path d="M15.5 156.40 L535.6 156.40" stroke="#bccde9" stroke-width="0.8"/><path d="M15.5 167.00 L535.6 167.00" stroke="#bccde9" stroke-width="0.8"/><path d="M15.5 177.60 L535.6 177.60" stroke="#bccde9" stroke-width="0.8"/><path d="M15.5 188.20 L535.6 188.20" stroke="#bccde9" stroke-width="0.8"/><path d="M15.5 198.80 L535.6 198.80" stroke="#bccde9" stroke-width="0.8"/><path d="M15.5 209.40 L535.6 209.40" stroke="#bccde9" stroke-width="0.8"/><path d="M15.5 220.00 L535.6 220.00" stroke="#bccde9" stroke-width="0.8"/><path d="M15.5 230.60 L535.6 230.60" stroke="#bccde9" stroke-width="0.8"/><path d="M15.5 241.20 L535.6 241.20" stroke="#bccde9" stroke-width="0.8"/><path d="M15.5 251.80 L535.6 251.80" stroke="#bccde9" stroke-width="0.8"/><path d="M15.5 262.40 L535.6 262.40" stroke="#bccde9" stroke-width="0.8"/><path d="M15.5 273.00 L535.6 273.00" stroke="#bccde9" stroke-width="0.8"/><path d="M15.5 283.60 L535.6 283.60" stroke="#bccde9" stroke-width="0.8"/><path d="M15.5 294.20 L535.6 294.20" stroke="#bccde9" stroke-width="0.8"/><path d="M15.5 304.80 L535.6 304.80" stroke="#bccde9" stroke-width="0.8"/><path d="M15.5 315.40 L535.6 315.40" stroke="#bccde9" stroke-width="0.8"/><path d="M15.5 326.00 L535.6 326.00" stroke="#bccde9" stroke-width="0.8"/><path d="M15.5 336.60 L535.6 336.60" stroke="#bccde9" stroke-width="0.8"/><path d="M15.5 347.20 L535.6 347.20" stroke="#bccde9" stroke-width="0.8"/><path d="M15.5 357.80 L535.6 357.80" stroke="#bccde9" stroke-width="0.8"/><path d="M15.5 368.40 L535.6 368.40" stroke="#bccde9" stroke-width="0.8"/><path d="M15.5 379.00 L535.6 379.00" stroke="#bccde9" stroke-width="0.8"/><path d="M15.5 389.60 L535.6 389.60" stroke="#bccde9" stroke-width="0.8"/><path d="M15.5 400.20 L535.6 400.20" stroke="#bccde9" stroke-width="0.8"/><path d="M15.5 410.80 L535.6 410.80" stroke="#bccde9" stroke-width="0.8"/><path d="M15.5 421.40 L535.6 421.40" stroke="#bccde9" stroke-width="0.8"/><path d="M535.6 145.8 L535.6 421.4" stroke="#a9bfe2" stroke-width="0.9"/><path d="M837 127.0 L837 421.4" stroke="#c8c8c8" stroke-width="0.9"/><rect x="15.5" y="127.0" width="520.1" height="18.80000000000001" fill="#4f81bd"/><rect x="198.60000000000002" y="219.8" width="37.49999999999998" height="11.2" fill="none" stroke="#217346" stroke-width="1.1"/><rect x="234.1" y="229.00000000000003" width="3.6" height="3.6" fill="#217346" stroke="#fff" stroke-width="0.6"/></svg>
<span class="t" style="left:30.83px;top:117.04px;font-size:8.6px;line-height:10.32px;color:#444;">A</span>
<span class="t" style="left:67.68px;top:117.04px;font-size:8.6px;line-height:10.32px;color:#444;">B</span>
<span class="t" style="left:104.39px;top:117.04px;font-size:8.6px;line-height:10.32px;color:#444;">C</span>
<span class="t" style="left:140.99px;top:117.04px;font-size:8.6px;line-height:10.32px;color:#444;">D</span>
<span class="t" style="left:177.73px;top:117.04px;font-size:8.6px;line-height:10.32px;color:#444;">E</span>
<span class="t" style="left:214.62px;top:117.04px;font-size:8.6px;line-height:10.32px;color:#217346;">F</span>
<span class="t" style="left:250.76px;top:117.04px;font-size:8.6px;line-height:10.32px;color:#444;">G</span>
<span class="t" style="left:287.84px;top:117.04px;font-size:8.6px;line-height:10.32px;color:#444;">H</span>
<span class="t" style="left:326.71px;top:117.04px;font-size:8.6px;line-height:10.32px;color:#444;">I</span>
<span class="t" style="left:362.55px;top:117.04px;font-size:8.6px;line-height:10.32px;color:#444;">J</span>
<span class="t" style="left:401.38px;top:117.04px;font-size:8.6px;line-height:10.32px;color:#444;">K</span>
<span class="t" style="left:441.46px;top:117.04px;font-size:8.6px;line-height:10.32px;color:#444;">L</span>
<span class="t" style="left:477.02px;top:117.04px;font-size:8.6px;line-height:10.32px;color:#444;">M</span>
<span class="t" style="left:514.19px;top:117.04px;font-size:8.6px;line-height:10.32px;color:#444;">N</span>
<span class="t" style="left:550.56px;top:117.04px;font-size:8.6px;line-height:10.32px;color:#444;">O</span>
<span class="t" style="left:587.63px;top:117.04px;font-size:8.6px;line-height:10.32px;color:#444;">P</span>
<span class="t" style="left:623.76px;top:117.04px;font-size:8.6px;line-height:10.32px;color:#444;">Q</span>
<span class="t" style="left:660.59px;top:117.04px;font-size:8.6px;line-height:10.32px;color:#444;">R</span>
<span class="t" style="left:697.48px;top:117.04px;font-size:8.6px;line-height:10.32px;color:#444;">S</span>
<span class="t" style="left:734.47px;top:117.04px;font-size:8.6px;line-height:10.32px;color:#444;">T</span>
<span class="t" style="left:770.79px;top:117.04px;font-size:8.6px;line-height:10.32px;color:#444;">U</span>
<span class="t" style="left:807.88px;top:117.04px;font-size:8.6px;line-height:10.32px;color:#444;">V</span>
<span class="t" style="left:4.84px;top:135.88px;font-size:9.2px;line-height:11.04px;color:#484848;transform:scaleX(0.8609);transform-origin:50% 50%;">1</span>
<span class="t" style="left:4.84px;top:146.18px;font-size:9.2px;line-height:11.04px;color:#484848;transform:scaleX(0.8600);transform-origin:50% 50%;">2</span>
<span class="t" style="left:4.84px;top:156.78px;font-size:9.2px;line-height:11.04px;color:#484848;transform:scaleX(0.8600);transform-origin:50% 50%;">3</span>
<span class="t" style="left:4.84px;top:167.38px;font-size:9.2px;line-height:11.04px;color:#484848;transform:scaleX(0.8600);transform-origin:50% 50%;">4</span>
<span class="t" style="left:4.84px;top:177.98px;font-size:9.2px;line-height:11.04px;color:#484848;transform:scaleX(0.8600);transform-origin:50% 50%;">5</span>
<span class="t" style="left:4.84px;top:188.58px;font-size:9.2px;line-height:11.04px;color:#484848;transform:scaleX(0.8600);transform-origin:50% 50%;">6</span>
<span class="t" style="left:4.84px;top:199.18px;font-size:9.2px;line-height:11.04px;color:#484848;transform:scaleX(0.8600);transform-origin:50% 50%;">7</span>
<span class="t" style="left:4.84px;top:209.78px;font-size:9.2px;line-height:11.04px;color:#484848;transform:scaleX(0.8600);transform-origin:50% 50%;">8</span>
<span class="t" style="left:4.84px;top:220.38px;font-size:9.2px;line-height:11.04px;color:#217346;transform:scaleX(0.8600);transform-origin:50% 50%;">9</span>
<span class="t" style="left:2.28px;top:230.98px;font-size:9.2px;line-height:11.04px;color:#484848;transform:scaleX(0.8600);transform-origin:50% 50%;">10</span>
<span class="t" style="left:2.62px;top:241.58px;font-size:9.2px;line-height:11.04px;color:#484848;transform:scaleX(0.8600);transform-origin:50% 50%;">11</span>
<span class="t" style="left:2.28px;top:252.18px;font-size:9.2px;line-height:11.04px;color:#484848;transform:scaleX(0.8600);transform-origin:50% 50%;">12</span>
<span class="t" style="left:2.28px;top:262.78px;font-size:9.2px;line-height:11.04px;color:#484848;transform:scaleX(0.8600);transform-origin:50% 50%;">13</span>
<span class="t" style="left:2.28px;top:273.38px;font-size:9.2px;line-height:11.04px;color:#484848;transform:scaleX(0.8600);transform-origin:50% 50%;">14</span>
<span class="t" style="left:2.28px;top:283.98px;font-size:9.2px;line-height:11.04px;color:#484848;transform:scaleX(0.8600);transform-origin:50% 50%;">15</span>
<span class="t" style="left:2.28px;top:294.58px;font-size:9.2px;line-height:11.04px;color:#484848;transform:scaleX(0.8600);transform-origin:50% 50%;">16</span>
<span class="t" style="left:2.28px;top:305.18px;font-size:9.2px;line-height:11.04px;color:#484848;transform:scaleX(0.8600);transform-origin:50% 50%;">17</span>
<span class="t" style="left:2.28px;top:315.78px;font-size:9.2px;line-height:11.04px;color:#484848;transform:scaleX(0.8600);transform-origin:50% 50%;">18</span>
<span class="t" style="left:2.28px;top:326.38px;font-size:9.2px;line-height:11.04px;color:#484848;transform:scaleX(0.8600);transform-origin:50% 50%;">19</span>
<span class="t" style="left:2.28px;top:336.98px;font-size:9.2px;line-height:11.04px;color:#484848;transform:scaleX(0.8600);transform-origin:50% 50%;">20</span>
<span class="t" style="left:2.28px;top:347.58px;font-size:9.2px;line-height:11.04px;color:#484848;transform:scaleX(0.8600);transform-origin:50% 50%;">21</span>
<span class="t" style="left:2.28px;top:358.18px;font-size:9.2px;line-height:11.04px;color:#484848;transform:scaleX(0.8600);transform-origin:50% 50%;">22</span>
<span class="t" style="left:2.28px;top:368.78px;font-size:9.2px;line-height:11.04px;color:#484848;transform:scaleX(0.8600);transform-origin:50% 50%;">23</span>
<span class="t" style="left:2.28px;top:379.38px;font-size:9.2px;line-height:11.04px;color:#484848;transform:scaleX(0.8600);transform-origin:50% 50%;">24</span>
<span class="t" style="left:2.28px;top:389.98px;font-size:9.2px;line-height:11.04px;color:#484848;transform:scaleX(0.8600);transform-origin:50% 50%;">25</span>
<span class="t" style="left:2.28px;top:400.58px;font-size:9.2px;line-height:11.04px;color:#484848;transform:scaleX(0.8600);transform-origin:50% 50%;">26</span>
<span class="t" style="left:2.28px;top:411.18px;font-size:9.2px;line-height:11.04px;color:#484848;transform:scaleX(0.8600);transform-origin:50% 50%;">27</span>
<span class="t" style="left:28.23px;top:132.44px;font-size:8.6px;line-height:10.32px;color:#fff;font-weight:700;">CRIM</span>
<span class="t" style="left:76.04px;top:132.44px;font-size:8.6px;line-height:10.32px;color:#fff;font-weight:700;">ZN</span>
<span class="t" style="left:97.34px;top:132.44px;font-size:8.6px;line-height:10.32px;color:#fff;font-weight:700;">INDUS</span>
<span class="t" style="left:136.33px;top:132.44px;font-size:8.6px;line-height:10.32px;color:#fff;font-weight:700;">CHAS</span>
<span class="t" style="left:178.46px;top:132.44px;font-size:8.6px;line-height:10.32px;color:#fff;font-weight:700;">NOX</span>
<span class="t" style="left:220.63px;top:132.44px;font-size:8.6px;line-height:10.32px;color:#fff;font-weight:700;">RM</span>
<span class="t" style="left:252.16px;top:132.44px;font-size:8.6px;line-height:10.32px;color:#fff;font-weight:700;">AGE</span>
<span class="t" style="left:293.36px;top:132.44px;font-size:8.6px;line-height:10.32px;color:#fff;font-weight:700;">DIS</span>
<span class="t" style="left:326.07px;top:132.44px;font-size:8.6px;line-height:10.32px;color:#fff;font-weight:700;">RAD</span>
<span class="t" style="left:364.74px;top:132.44px;font-size:8.6px;line-height:10.32px;color:#fff;font-weight:700;">TAX</span>
<span class="t" style="left:386.70px;top:132.44px;font-size:8.6px;line-height:10.32px;color:#fff;font-weight:700;">PTRATIO</span>
<span class="t" style="left:454.29px;top:132.44px;font-size:8.6px;line-height:10.32px;color:#fff;font-weight:700;">B</span>
<span class="t" style="left:470.87px;top:132.44px;font-size:8.6px;line-height:10.32px;color:#fff;font-weight:700;">LSTAT</span>
<span class="t" style="left:509.05px;top:132.44px;font-size:8.6px;line-height:10.32px;color:#fff;font-weight:700;">MEDV</span>
<span class="t" style="left:20.82px;top:147.04px;font-size:8.1px;line-height:9.72px;color:#0a0a0a;transform:scaleX(0.9400);transform-origin:100% 50%;-webkit-text-stroke:0.2px #222;">0.00632</span>
<span class="t" style="left:78.39px;top:147.04px;font-size:8.1px;line-height:9.72px;color:#0a0a0a;transform:scaleX(0.9400);transform-origin:100% 50%;-webkit-text-stroke:0.2px #222;">18</span>
<span class="t" style="left:108.23px;top:147.04px;font-size:8.1px;line-height:9.72px;color:#0a0a0a;transform:scaleX(0.9400);transform-origin:100% 50%;-webkit-text-stroke:0.2px #222;">2.31</span>
<span class="t" style="left:156.10px;top:147.04px;font-size:8.1px;line-height:9.72px;color:#0a0a0a;transform:scaleX(0.9400);transform-origin:100% 50%;-webkit-text-stroke:0.2px #222;">0</span>
<span class="t" style="left:176.73px;top:147.04px;font-size:8.1px;line-height:9.72px;color:#0a0a0a;transform:scaleX(0.9400);transform-origin:100% 50%;-webkit-text-stroke:0.2px #222;">0.538</span>
<span class="t" style="left:213.63px;top:147.04px;font-size:8.1px;line-height:9.72px;color:#0a0a0a;transform:scaleX(0.9400);transform-origin:100% 50%;-webkit-text-stroke:0.2px #222;">6.575</span>
<span class="t" style="left:254.93px;top:147.04px;font-size:8.1px;line-height:9.72px;color:#0a0a0a;transform:scaleX(0.9400);transform-origin:100% 50%;-webkit-text-stroke:0.2px #222;">65.2</span>
<span class="t" style="left:291.83px;top:147.04px;font-size:8.1px;line-height:9.72px;color:#0a0a0a;transform:scaleX(0.9400);transform-origin:100% 50%;-webkit-text-stroke:0.2px #222;">4.09</span>
<span class="t" style="left:340.10px;top:147.04px;font-size:8.1px;line-height:9.72px;color:#0a0a0a;transform:scaleX(0.9400);transform-origin:100% 50%;-webkit-text-stroke:0.2px #222;">1</span>
<span class="t" style="left:367.69px;top:147.04px;font-size:8.1px;line-height:9.72px;color:#0a0a0a;transform:scaleX(0.9400);transform-origin:100% 50%;-webkit-text-stroke:0.2px #222;">296</span>
<span class="t" style="left:407.93px;top:147.04px;font-size:8.1px;line-height:9.72px;color:#0a0a0a;transform:scaleX(0.9400);transform-origin:100% 50%;-webkit-text-stroke:0.2px #222;">15.3</span>
<span class="t" style="left:440.13px;top:147.04px;font-size:8.1px;line-height:9.72px;color:#0a0a0a;transform:scaleX(0.9400);transform-origin:100% 50%;-webkit-text-stroke:0.2px #222;">396.9</span>
<span class="t" style="left:481.43px;top:147.04px;font-size:8.1px;line-height:9.72px;color:#0a0a0a;transform:scaleX(0.9400);transform-origin:100% 50%;-webkit-text-stroke:0.2px #222;">4.98</span>
<span class="t" style="left:524.79px;top:147.04px;font-size:8.1px;line-height:9.72px;color:#0a0a0a;transform:scaleX(0.9400);transform-origin:100% 50%;-webkit-text-stroke:0.2px #222;">24</span>
<span class="t" style="left:20.82px;top:157.64px;font-size:8.1px;line-height:9.72px;color:#0a0a0a;transform:scaleX(0.9400);transform-origin:100% 50%;-webkit-text-stroke:0.2px #222;">0.02731</span>
<span class="t" style="left:82.90px;top:157.64px;font-size:8.1px;line-height:9.72px;color:#0a0a0a;transform:scaleX(0.9400);transform-origin:100% 50%;-webkit-text-stroke:0.2px #222;">0</span>
<span class="t" style="left:108.23px;top:157.64px;font-size:8.1px;line-height:9.72px;color:#0a0a0a;transform:scaleX(0.9400);transform-origin:100% 50%;-webkit-text-stroke:0.2px #222;">7.07</span>
<span class="t" style="left:156.10px;top:157.64px;font-size:8.1px;line-height:9.72px;color:#0a0a0a;transform:scaleX(0.9400);transform-origin:100% 50%;-webkit-text-stroke:0.2px #222;">0</span>
<span class="t" style="left:176.73px;top:157.64px;font-size:8.1px;line-height:9.72px;color:#0a0a0a;transform:scaleX(0.9400);transform-origin:100% 50%;-webkit-text-stroke:0.2px #222;">0.469</span>
<span class="t" style="left:213.63px;top:157.64px;font-size:8.1px;line-height:9.72px;color:#0a0a0a;transform:scaleX(0.9400);transform-origin:100% 50%;-webkit-text-stroke:0.2px #222;">6.421</span>
<span class="t" style="left:254.93px;top:157.64px;font-size:8.1px;line-height:9.72px;color:#0a0a0a;transform:scaleX(0.9400);transform-origin:100% 50%;-webkit-text-stroke:0.2px #222;">78.9</span>
<span class="t" style="left:282.83px;top:157.64px;font-size:8.1px;line-height:9.72px;color:#0a0a0a;transform:scaleX(0.9400);transform-origin:100% 50%;-webkit-text-stroke:0.2px #222;">4.9671</span>
<span class="t" style="left:340.10px;top:157.64px;font-size:8.1px;line-height:9.72px;color:#0a0a0a;transform:scaleX(0.9400);transform-origin:100% 50%;-webkit-text-stroke:0.2px #222;">2</span>
<span class="t" style="left:367.69px;top:157.64px;font-size:8.1px;line-height:9.72px;color:#0a0a0a;transform:scaleX(0.9400);transform-origin:100% 50%;-webkit-text-stroke:0.2px #222;">242</span>
<span class="t" style="left:407.93px;top:157.64px;font-size:8.1px;line-height:9.72px;color:#0a0a0a;transform:scaleX(0.9400);transform-origin:100% 50%;-webkit-text-stroke:0.2px #222;">17.8</span>
<span class="t" style="left:440.13px;top:157.64px;font-size:8.1px;line-height:9.72px;color:#0a0a0a;transform:scaleX(0.9400);transform-origin:100% 50%;-webkit-text-stroke:0.2px #222;">396.9</span>
<span class="t" style="left:481.43px;top:157.64px;font-size:8.1px;line-height:9.72px;color:#0a0a0a;transform:scaleX(0.9400);transform-origin:100% 50%;-webkit-text-stroke:0.2px #222;">9.14</span>
<span class="t" style="left:518.03px;top:157.64px;font-size:8.1px;line-height:9.72px;color:#0a0a0a;transform:scaleX(0.9400);transform-origin:100% 50%;-webkit-text-stroke:0.2px #222;">21.6</span>
<span class="t" style="left:20.82px;top:168.24px;font-size:8.1px;line-height:9.72px;color:#0a0a0a;transform:scaleX(0.9400);transform-origin:100% 50%;-webkit-text-stroke:0.2px #222;">0.02729</span>
<span class="t" style="left:82.90px;top:168.24px;font-size:8.1px;line-height:9.72px;color:#0a0a0a;transform:scaleX(0.9400);transform-origin:100% 50%;-webkit-text-stroke:0.2px #222;">0</span>
<span class="t" style="left:108.23px;top:168.24px;font-size:8.1px;line-height:9.72px;color:#0a0a0a;transform:scaleX(0.9400);transform-origin:100% 50%;-webkit-text-stroke:0.2px #222;">7.07</span>
<span class="t" style="left:156.10px;top:168.24px;font-size:8.1px;line-height:9.72px;color:#0a0a0a;transform:scaleX(0.9400);transform-origin:100% 50%;-webkit-text-stroke:0.2px #222;">0</span>
<span class="t" style="left:176.73px;top:168.24px;font-size:8.1px;line-height:9.72px;color:#0a0a0a;transform:scaleX(0.9400);transform-origin:100% 50%;-webkit-text-stroke:0.2px #222;">0.469</span>
<span class="t" style="left:213.63px;top:168.24px;font-size:8.1px;line-height:9.72px;color:#0a0a0a;transform:scaleX(0.9400);transform-origin:100% 50%;-webkit-text-stroke:0.2px #222;">7.185</span>
<span class="t" style="left:254.93px;top:168.24px;font-size:8.1px;line-height:9.72px;color:#0a0a0a;transform:scaleX(0.9400);transform-origin:100% 50%;-webkit-text-stroke:0.2px #222;">61.1</span>
<span class="t" style="left:282.83px;top:168.24px;font-size:8.1px;line-height:9.72px;color:#0a0a0a;transform:scaleX(0.9400);transform-origin:100% 50%;-webkit-text-stroke:0.2px #222;">4.9671</span>
<span class="t" style="left:340.10px;top:168.24px;font-size:8.1px;line-height:9.72px;color:#0a0a0a;transform:scaleX(0.9400);transform-origin:100% 50%;-webkit-text-stroke:0.2px #222;">2</span>
<span class="t" style="left:367.69px;top:168.24px;font-size:8.1px;line-height:9.72px;color:#0a0a0a;transform:scaleX(0.9400);transform-origin:100% 50%;-webkit-text-stroke:0.2px #222;">242</span>
<span class="t" style="left:407.93px;top:168.24px;font-size:8.1px;line-height:9.72px;color:#0a0a0a;transform:scaleX(0.9400);transform-origin:100% 50%;-webkit-text-stroke:0.2px #222;">17.8</span>
<span class="t" style="left:435.63px;top:168.24px;font-size:8.1px;line-height:9.72px;color:#0a0a0a;transform:scaleX(0.9400);transform-origin:100% 50%;-webkit-text-stroke:0.2px #222;">392.83</span>
<span class="t" style="left:481.43px;top:168.24px;font-size:8.1px;line-height:9.72px;color:#0a0a0a;transform:scaleX(0.9400);transform-origin:100% 50%;-webkit-text-stroke:0.2px #222;">4.03</span>
<span class="t" style="left:518.03px;top:168.24px;font-size:8.1px;line-height:9.72px;color:#0a0a0a;transform:scaleX(0.9400);transform-origin:100% 50%;-webkit-text-stroke:0.2px #222;">34.7</span>
<span class="t" style="left:20.82px;top:178.84px;font-size:8.1px;line-height:9.72px;color:#0a0a0a;transform:scaleX(0.9400);transform-origin:100% 50%;-webkit-text-stroke:0.2px #222;">0.03237</span>
<span class="t" style="left:82.90px;top:178.84px;font-size:8.1px;line-height:9.72px;color:#0a0a0a;transform:scaleX(0.9400);transform-origin:100% 50%;-webkit-text-stroke:0.2px #222;">0</span>
<span class="t" style="left:108.23px;top:178.84px;font-size:8.1px;line-height:9.72px;color:#0a0a0a;transform:scaleX(0.9400);transform-origin:100% 50%;-webkit-text-stroke:0.2px #222;">2.18</span>
<span class="t" style="left:156.10px;top:178.84px;font-size:8.1px;line-height:9.72px;color:#0a0a0a;transform:scaleX(0.9400);transform-origin:100% 50%;-webkit-text-stroke:0.2px #222;">0</span>
<span class="t" style="left:176.73px;top:178.84px;font-size:8.1px;line-height:9.72px;color:#0a0a0a;transform:scaleX(0.9400);transform-origin:100% 50%;-webkit-text-stroke:0.2px #222;">0.458</span>
<span class="t" style="left:213.63px;top:178.84px;font-size:8.1px;line-height:9.72px;color:#0a0a0a;transform:scaleX(0.9400);transform-origin:100% 50%;-webkit-text-stroke:0.2px #222;">6.998</span>
<span class="t" style="left:254.93px;top:178.84px;font-size:8.1px;line-height:9.72px;color:#0a0a0a;transform:scaleX(0.9400);transform-origin:100% 50%;-webkit-text-stroke:0.2px #222;">45.8</span>
<span class="t" style="left:282.83px;top:178.84px;font-size:8.1px;line-height:9.72px;color:#0a0a0a;transform:scaleX(0.9400);transform-origin:100% 50%;-webkit-text-stroke:0.2px #222;">6.0622</span>
<span class="t" style="left:340.10px;top:178.84px;font-size:8.1px;line-height:9.72px;color:#0a0a0a;transform:scaleX(0.9400);transform-origin:100% 50%;-webkit-text-stroke:0.2px #222;">3</span>
<span class="t" style="left:367.69px;top:178.84px;font-size:8.1px;line-height:9.72px;color:#0a0a0a;transform:scaleX(0.9400);transform-origin:100% 50%;-webkit-text-stroke:0.2px #222;">222</span>
<span class="t" style="left:407.93px;top:178.84px;font-size:8.1px;line-height:9.72px;color:#0a0a0a;transform:scaleX(0.9400);transform-origin:100% 50%;-webkit-text-stroke:0.2px #222;">18.7</span>
<span class="t" style="left:435.63px;top:178.84px;font-size:8.1px;line-height:9.72px;color:#0a0a0a;transform:scaleX(0.9400);transform-origin:100% 50%;-webkit-text-stroke:0.2px #222;">394.63</span>
<span class="t" style="left:481.43px;top:178.84px;font-size:8.1px;line-height:9.72px;color:#0a0a0a;transform:scaleX(0.9400);transform-origin:100% 50%;-webkit-text-stroke:0.2px #222;">2.94</span>
<span class="t" style="left:518.03px;top:178.84px;font-size:8.1px;line-height:9.72px;color:#0a0a0a;transform:scaleX(0.9400);transform-origin:100% 50%;-webkit-text-stroke:0.2px #222;">33.4</span>
<span class="t" style="left:20.82px;top:189.44px;font-size:8.1px;line-height:9.72px;color:#0a0a0a;transform:scaleX(0.9400);transform-origin:100% 50%;-webkit-text-stroke:0.2px #222;">0.06905</span>
<span class="t" style="left:82.90px;top:189.44px;font-size:8.1px;line-height:9.72px;color:#0a0a0a;transform:scaleX(0.9400);transform-origin:100% 50%;-webkit-text-stroke:0.2px #222;">0</span>
<span class="t" style="left:108.23px;top:189.44px;font-size:8.1px;line-height:9.72px;color:#0a0a0a;transform:scaleX(0.9400);transform-origin:100% 50%;-webkit-text-stroke:0.2px #222;">2.18</span>
<span class="t" style="left:156.10px;top:189.44px;font-size:8.1px;line-height:9.72px;color:#0a0a0a;transform:scaleX(0.9400);transform-origin:100% 50%;-webkit-text-stroke:0.2px #222;">0</span>
<span class="t" style="left:176.73px;top:189.44px;font-size:8.1px;line-height:9.72px;color:#0a0a0a;transform:scaleX(0.9400);transform-origin:100% 50%;-webkit-text-stroke:0.2px #222;">0.458</span>
<span class="t" style="left:213.63px;top:189.44px;font-size:8.1px;line-height:9.72px;color:#0a0a0a;transform:scaleX(0.9400);transform-origin:100% 50%;-webkit-text-stroke:0.2px #222;">7.147</span>
<span class="t" style="left:254.93px;top:189.44px;font-size:8.1px;line-height:9.72px;color:#0a0a0a;transform:scaleX(0.9400);transform-origin:100% 50%;-webkit-text-stroke:0.2px #222;">54.2</span>
<span class="t" style="left:282.83px;top:189.44px;font-size:8.1px;line-height:9.72px;color:#0a0a0a;transform:scaleX(0.9400);transform-origin:100% 50%;-webkit-text-stroke:0.2px #222;">6.0622</span>
<span class="t" style="left:340.10px;top:189.44px;font-size:8.1px;line-height:9.72px;color:#0a0a0a;transform:scaleX(0.9400);transform-origin:100% 50%;-webkit-text-stroke:0.2px #222;">3</span>
<span class="t" style="left:367.69px;top:189.44px;font-size:8.1px;line-height:9.72px;color:#0a0a0a;transform:scaleX(0.9400);transform-origin:100% 50%;-webkit-text-stroke:0.2px #222;">222</span>
<span class="t" style="left:407.93px;top:189.44px;font-size:8.1px;line-height:9.72px;color:#0a0a0a;transform:scaleX(0.9400);transform-origin:100% 50%;-webkit-text-stroke:0.2px #222;">18.7</span>
<span class="t" style="left:440.13px;top:189.44px;font-size:8.1px;line-height:9.72px;color:#0a0a0a;transform:scaleX(0.9400);transform-origin:100% 50%;-webkit-text-stroke:0.2px #222;">396.9</span>
<span class="t" style="left:481.43px;top:189.44px;font-size:8.1px;line-height:9.72px;color:#0a0a0a;transform:scaleX(0.9400);transform-origin:100% 50%;-webkit-text-stroke:0.2px #222;">5.33</span>
<span class="t" style="left:518.03px;top:189.44px;font-size:8.1px;line-height:9.72px;color:#0a0a0a;transform:scaleX(0.9400);transform-origin:100% 50%;-webkit-text-stroke:0.2px #222;">36.2</span>
<span class="t" style="left:20.82px;top:200.04px;font-size:8.1px;line-height:9.72px;color:#0a0a0a;transform:scaleX(0.9400);transform-origin:100% 50%;-webkit-text-stroke:0.2px #222;">0.02985</span>
<span class="t" style="left:82.90px;top:200.04px;font-size:8.1px;line-height:9.72px;color:#0a0a0a;transform:scaleX(0.9400);transform-origin:100% 50%;-webkit-text-stroke:0.2px #222;">0</span>
<span class="t" style="left:108.23px;top:200.04px;font-size:8.1px;line-height:9.72px;color:#0a0a0a;transform:scaleX(0.9400);transform-origin:100% 50%;-webkit-text-stroke:0.2px #222;">2.18</span>
<span class="t" style="left:156.10px;top:200.04px;font-size:8.1px;line-height:9.72px;color:#0a0a0a;transform:scaleX(0.9400);transform-origin:100% 50%;-webkit-text-stroke:0.2px #222;">0</span>
<span class="t" style="left:176.73px;top:200.04px;font-size:8.1px;line-height:9.72px;color:#0a0a0a;transform:scaleX(0.9400);transform-origin:100% 50%;-webkit-text-stroke:0.2px #222;">0.458</span>
<span class="t" style="left:218.13px;top:200.04px;font-size:8.1px;line-height:9.72px;color:#0a0a0a;transform:scaleX(0.9400);transform-origin:100% 50%;-webkit-text-stroke:0.2px #222;">6.43</span>
<span class="t" style="left:254.93px;top:200.04px;font-size:8.1px;line-height:9.72px;color:#0a0a0a;transform:scaleX(0.9400);transform-origin:100% 50%;-webkit-text-stroke:0.2px #222;">58.7</span>
<span class="t" style="left:282.83px;top:200.04px;font-size:8.1px;line-height:9.72px;color:#0a0a0a;transform:scaleX(0.9400);transform-origin:100% 50%;-webkit-text-stroke:0.2px #222;">6.0622</span>
<span class="t" style="left:340.10px;top:200.04px;font-size:8.1px;line-height:9.72px;color:#0a0a0a;transform:scaleX(0.9400);transform-origin:100% 50%;-webkit-text-stroke:0.2px #222;">3</span>
<span class="t" style="left:367.69px;top:200.04px;font-size:8.1px;line-height:9.72px;color:#0a0a0a;transform:scaleX(0.9400);transform-origin:100% 50%;-webkit-text-stroke:0.2px #222;">222</span>
<span class="t" style="left:407.93px;top:200.04px;font-size:8.1px;line-height:9.72px;color:#0a0a0a;transform:scaleX(0.9400);transform-origin:100% 50%;-webkit-text-stroke:0.2px #222;">18.7</span>
<span class="t" style="left:435.63px;top:200.04px;font-size:8.1px;line-height:9.72px;color:#0a0a0a;transform:scaleX(0.9400);transform-origin:100% 50%;-webkit-text-stroke:0.2px #222;">394.12</span>
<span class="t" style="left:481.43px;top:200.04px;font-size:8.1px;line-height:9.72px;color:#0a0a0a;transform:scaleX(0.9400);transform-origin:100% 50%;-webkit-text-stroke:0.2px #222;">5.21</span>
<span class="t" style="left:518.03px;top:200.04px;font-size:8.1px;line-height:9.72px;color:#0a0a0a;transform:scaleX(0.9400);transform-origin:100% 50%;-webkit-text-stroke:0.2px #222;">28.7</span>
<span class="t" style="left:20.82px;top:210.64px;font-size:8.1px;line-height:9.72px;color:#0a0a0a;transform:scaleX(0.9400);transform-origin:100% 50%;-webkit-text-stroke:0.2px #222;">0.08829</span>
<span class="t" style="left:71.63px;top:210.64px;font-size:8.1px;line-height:9.72px;color:#0a0a0a;transform:scaleX(0.9400);transform-origin:100% 50%;-webkit-text-stroke:0.2px #222;">12.5</span>
<span class="t" style="left:108.23px;top:210.64px;font-size:8.1px;line-height:9.72px;color:#0a0a0a;transform:scaleX(0.9400);transform-origin:100% 50%;-webkit-text-stroke:0.2px #222;">7.87</span>
<span class="t" style="left:156.10px;top:210.64px;font-size:8.1px;line-height:9.72px;color:#0a0a0a;transform:scaleX(0.9400);transform-origin:100% 50%;-webkit-text-stroke:0.2px #222;">0</span>
<span class="t" style="left:176.73px;top:210.64px;font-size:8.1px;line-height:9.72px;color:#0a0a0a;transform:scaleX(0.9400);transform-origin:100% 50%;-webkit-text-stroke:0.2px #222;">0.524</span>
<span class="t" style="left:213.63px;top:210.64px;font-size:8.1px;line-height:9.72px;color:#0a0a0a;transform:scaleX(0.9400);transform-origin:100% 50%;-webkit-text-stroke:0.2px #222;">6.012</span>
<span class="t" style="left:254.93px;top:210.64px;font-size:8.1px;line-height:9.72px;color:#0a0a0a;transform:scaleX(0.9400);transform-origin:100% 50%;-webkit-text-stroke:0.2px #222;">66.6</span>
<span class="t" style="left:282.83px;top:210.64px;font-size:8.1px;line-height:9.72px;color:#0a0a0a;transform:scaleX(0.9400);transform-origin:100% 50%;-webkit-text-stroke:0.2px #222;">5.5605</span>
<span class="t" style="left:340.10px;top:210.64px;font-size:8.1px;line-height:9.72px;color:#0a0a0a;transform:scaleX(0.9400);transform-origin:100% 50%;-webkit-text-stroke:0.2px #222;">5</span>
<span class="t" style="left:368.29px;top:210.64px;font-size:8.1px;line-height:9.72px;color:#0a0a0a;transform:scaleX(0.9400);transform-origin:100% 50%;-webkit-text-stroke:0.2px #222;">311</span>
<span class="t" style="left:407.93px;top:210.64px;font-size:8.1px;line-height:9.72px;color:#0a0a0a;transform:scaleX(0.9400);transform-origin:100% 50%;-webkit-text-stroke:0.2px #222;">15.2</span>
<span class="t" style="left:440.13px;top:210.64px;font-size:8.1px;line-height:9.72px;color:#0a0a0a;transform:scaleX(0.9400);transform-origin:100% 50%;-webkit-text-stroke:0.2px #222;">395.6</span>
<span class="t" style="left:476.93px;top:210.64px;font-size:8.1px;line-height:9.72px;color:#0a0a0a;transform:scaleX(0.9400);transform-origin:100% 50%;-webkit-text-stroke:0.2px #222;">12.43</span>
<span class="t" style="left:518.03px;top:210.64px;font-size:8.1px;line-height:9.72px;color:#0a0a0a;transform:scaleX(0.9400);transform-origin:100% 50%;-webkit-text-stroke:0.2px #222;">22.9</span>
<span class="t" style="left:20.82px;top:221.24px;font-size:8.1px;line-height:9.72px;color:#0a0a0a;transform:scaleX(0.9400);transform-origin:100% 50%;-webkit-text-stroke:0.2px #222;">0.14455</span>
<span class="t" style="left:71.63px;top:221.24px;font-size:8.1px;line-height:9.72px;color:#0a0a0a;transform:scaleX(0.9400);transform-origin:100% 50%;-webkit-text-stroke:0.2px #222;">12.5</span>
<span class="t" style="left:108.23px;top:221.24px;font-size:8.1px;line-height:9.72px;color:#0a0a0a;transform:scaleX(0.9400);transform-origin:100% 50%;-webkit-text-stroke:0.2px #222;">7.87</span>
<span class="t" style="left:156.10px;top:221.24px;font-size:8.1px;line-height:9.72px;color:#0a0a0a;transform:scaleX(0.9400);transform-origin:100% 50%;-webkit-text-stroke:0.2px #222;">0</span>
<span class="t" style="left:176.73px;top:221.24px;font-size:8.1px;line-height:9.72px;color:#0a0a0a;transform:scaleX(0.9400);transform-origin:100% 50%;-webkit-text-stroke:0.2px #222;">0.524</span>
<span class="t" style="left:213.63px;top:221.24px;font-size:8.1px;line-height:9.72px;color:#0a0a0a;transform:scaleX(0.9400);transform-origin:100% 50%;-webkit-text-stroke:0.2px #222;">6.172</span>
<span class="t" style="left:254.93px;top:221.24px;font-size:8.1px;line-height:9.72px;color:#0a0a0a;transform:scaleX(0.9400);transform-origin:100% 50%;-webkit-text-stroke:0.2px #222;">96.1</span>
<span class="t" style="left:282.83px;top:221.24px;font-size:8.1px;line-height:9.72px;color:#0a0a0a;transform:scaleX(0.9400);transform-origin:100% 50%;-webkit-text-stroke:0.2px #222;">5.9505</span>
<span class="t" style="left:340.10px;top:221.24px;font-size:8.1px;line-height:9.72px;color:#0a0a0a;transform:scaleX(0.9400);transform-origin:100% 50%;-webkit-text-stroke:0.2px #222;">5</span>
<span class="t" style="left:368.29px;top:221.24px;font-size:8.1px;line-height:9.72px;color:#0a0a0a;transform:scaleX(0.9400);transform-origin:100% 50%;-webkit-text-stroke:0.2px #222;">311</span>
<span class="t" style="left:407.93px;top:221.24px;font-size:8.1px;line-height:9.72px;color:#0a0a0a;transform:scaleX(0.9400);transform-origin:100% 50%;-webkit-text-stroke:0.2px #222;">15.2</span>
<span class="t" style="left:440.13px;top:221.24px;font-size:8.1px;line-height:9.72px;color:#0a0a0a;transform:scaleX(0.9400);transform-origin:100% 50%;-webkit-text-stroke:0.2px #222;">396.9</span>
<span class="t" style="left:476.93px;top:221.24px;font-size:8.1px;line-height:9.72px;color:#0a0a0a;transform:scaleX(0.9400);transform-origin:100% 50%;-webkit-text-stroke:0.2px #222;">19.15</span>
<span class="t" style="left:518.03px;top:221.24px;font-size:8.1px;line-height:9.72px;color:#0a0a0a;transform:scaleX(0.9400);transform-origin:100% 50%;-webkit-text-stroke:0.2px #222;">27.1</span>
<span class="t" style="left:21.42px;top:231.84px;font-size:8.1px;line-height:9.72px;color:#0a0a0a;transform:scaleX(0.9400);transform-origin:100% 50%;-webkit-text-stroke:0.2px #222;">0.21124</span>
<span class="t" style="left:71.63px;top:231.84px;font-size:8.1px;line-height:9.72px;color:#0a0a0a;transform:scaleX(0.9400);transform-origin:100% 50%;-webkit-text-stroke:0.2px #222;">12.5</span>
<span class="t" style="left:108.23px;top:231.84px;font-size:8.1px;line-height:9.72px;color:#0a0a0a;transform:scaleX(0.9400);transform-origin:100% 50%;-webkit-text-stroke:0.2px #222;">7.87</span>
<span class="t" style="left:156.10px;top:231.84px;font-size:8.1px;line-height:9.72px;color:#0a0a0a;transform:scaleX(0.9400);transform-origin:100% 50%;-webkit-text-stroke:0.2px #222;">0</span>
<span class="t" style="left:176.73px;top:231.84px;font-size:8.1px;line-height:9.72px;color:#0a0a0a;transform:scaleX(0.9400);transform-origin:100% 50%;-webkit-text-stroke:0.2px #222;">0.524</span>
<span class="t" style="left:213.63px;top:231.84px;font-size:8.1px;line-height:9.72px;color:#0a0a0a;transform:scaleX(0.9400);transform-origin:100% 50%;-webkit-text-stroke:0.2px #222;">5.631</span>
<span class="t" style="left:257.19px;top:231.84px;font-size:8.1px;line-height:9.72px;color:#0a0a0a;transform:scaleX(0.9400);transform-origin:100% 50%;-webkit-text-stroke:0.2px #222;">100</span>
<span class="t" style="left:282.83px;top:231.84px;font-size:8.1px;line-height:9.72px;color:#0a0a0a;transform:scaleX(0.9400);transform-origin:100% 50%;-webkit-text-stroke:0.2px #222;">6.0821</span>
<span class="t" style="left:340.10px;top:231.84px;font-size:8.1px;line-height:9.72px;color:#0a0a0a;transform:scaleX(0.9400);transform-origin:100% 50%;-webkit-text-stroke:0.2px #222;">5</span>
<span class="t" style="left:368.29px;top:231.84px;font-size:8.1px;line-height:9.72px;color:#0a0a0a;transform:scaleX(0.9400);transform-origin:100% 50%;-webkit-text-stroke:0.2px #222;">311</span>
<span class="t" style="left:407.93px;top:231.84px;font-size:8.1px;line-height:9.72px;color:#0a0a0a;transform:scaleX(0.9400);transform-origin:100% 50%;-webkit-text-stroke:0.2px #222;">15.2</span>
<span class="t" style="left:435.63px;top:231.84px;font-size:8.1px;line-height:9.72px;color:#0a0a0a;transform:scaleX(0.9400);transform-origin:100% 50%;-webkit-text-stroke:0.2px #222;">386.63</span>
<span class="t" style="left:476.93px;top:231.84px;font-size:8.1px;line-height:9.72px;color:#0a0a0a;transform:scaleX(0.9400);transform-origin:100% 50%;-webkit-text-stroke:0.2px #222;">29.93</span>
<span class="t" style="left:518.03px;top:231.84px;font-size:8.1px;line-height:9.72px;color:#0a0a0a;transform:scaleX(0.9400);transform-origin:100% 50%;-webkit-text-stroke:0.2px #222;">16.5</span>
<span class="t" style="left:20.82px;top:242.44px;font-size:8.1px;line-height:9.72px;color:#0a0a0a;transform:scaleX(0.9400);transform-origin:100% 50%;-webkit-text-stroke:0.2px #222;">0.17004</span>
<span class="t" style="left:71.63px;top:242.44px;font-size:8.1px;line-height:9.72px;color:#0a0a0a;transform:scaleX(0.9400);transform-origin:100% 50%;-webkit-text-stroke:0.2px #222;">12.5</span>
<span class="t" style="left:108.23px;top:242.44px;font-size:8.1px;line-height:9.72px;color:#0a0a0a;transform:scaleX(0.9400);transform-origin:100% 50%;-webkit-text-stroke:0.2px #222;">7.87</span>
<span class="t" style="left:156.10px;top:242.44px;font-size:8.1px;line-height:9.72px;color:#0a0a0a;transform:scaleX(0.9400);transform-origin:100% 50%;-webkit-text-stroke:0.2px #222;">0</span>
<span class="t" style="left:176.73px;top:242.44px;font-size:8.1px;line-height:9.72px;color:#0a0a0a;transform:scaleX(0.9400);transform-origin:100% 50%;-webkit-text-stroke:0.2px #222;">0.524</span>
<span class="t" style="left:213.63px;top:242.44px;font-size:8.1px;line-height:9.72px;color:#0a0a0a;transform:scaleX(0.9400);transform-origin:100% 50%;-webkit-text-stroke:0.2px #222;">6.004</span>
<span class="t" style="left:254.93px;top:242.44px;font-size:8.1px;line-height:9.72px;color:#0a0a0a;transform:scaleX(0.9400);transform-origin:100% 50%;-webkit-text-stroke:0.2px #222;">85.9</span>
<span class="t" style="left:282.83px;top:242.44px;font-size:8.1px;line-height:9.72px;color:#0a0a0a;transform:scaleX(0.9400);transform-origin:100% 50%;-webkit-text-stroke:0.2px #222;">6.5921</span>
<span class="t" style="left:340.10px;top:242.44px;font-size:8.1px;line-height:9.72px;color:#0a0a0a;transform:scaleX(0.9400);transform-origin:100% 50%;-webkit-text-stroke:0.2px #222;">5</span>
<span class="t" style="left:368.29px;top:242.44px;font-size:8.1px;line-height:9.72px;color:#0a0a0a;transform:scaleX(0.9400);transform-origin:100% 50%;-webkit-text-stroke:0.2px #222;">311</span>
<span class="t" style="left:407.93px;top:242.44px;font-size:8.1px;line-height:9.72px;color:#0a0a0a;transform:scaleX(0.9400);transform-origin:100% 50%;-webkit-text-stroke:0.2px #222;">15.2</span>
<span class="t" style="left:435.63px;top:242.44px;font-size:8.1px;line-height:9.72px;color:#0a0a0a;transform:scaleX(0.9400);transform-origin:100% 50%;-webkit-text-stroke:0.2px #222;">386.71</span>
<span class="t" style="left:481.43px;top:242.44px;font-size:8.1px;line-height:9.72px;color:#0a0a0a;transform:scaleX(0.9400);transform-origin:100% 50%;-webkit-text-stroke:0.2px #222;">17.1</span>
<span class="t" style="left:518.03px;top:242.44px;font-size:8.1px;line-height:9.72px;color:#0a0a0a;transform:scaleX(0.9400);transform-origin:100% 50%;-webkit-text-stroke:0.2px #222;">18.9</span>
<span class="t" style="left:20.82px;top:253.04px;font-size:8.1px;line-height:9.72px;color:#0a0a0a;transform:scaleX(0.9400);transform-origin:100% 50%;-webkit-text-stroke:0.2px #222;">0.22489</span>
<span class="t" style="left:71.63px;top:253.04px;font-size:8.1px;line-height:9.72px;color:#0a0a0a;transform:scaleX(0.9400);transform-origin:100% 50%;-webkit-text-stroke:0.2px #222;">12.5</span>
<span class="t" style="left:108.23px;top:253.04px;font-size:8.1px;line-height:9.72px;color:#0a0a0a;transform:scaleX(0.9400);transform-origin:100% 50%;-webkit-text-stroke:0.2px #222;">7.87</span>
<span class="t" style="left:156.10px;top:253.04px;font-size:8.1px;line-height:9.72px;color:#0a0a0a;transform:scaleX(0.9400);transform-origin:100% 50%;-webkit-text-stroke:0.2px #222;">0</span>
<span class="t" style="left:176.73px;top:253.04px;font-size:8.1px;line-height:9.72px;color:#0a0a0a;transform:scaleX(0.9400);transform-origin:100% 50%;-webkit-text-stroke:0.2px #222;">0.524</span>
<span class="t" style="left:213.63px;top:253.04px;font-size:8.1px;line-height:9.72px;color:#0a0a0a;transform:scaleX(0.9400);transform-origin:100% 50%;-webkit-text-stroke:0.2px #222;">6.377</span>
<span class="t" style="left:254.93px;top:253.04px;font-size:8.1px;line-height:9.72px;color:#0a0a0a;transform:scaleX(0.9400);transform-origin:100% 50%;-webkit-text-stroke:0.2px #222;">94.3</span>
<span class="t" style="left:282.83px;top:253.04px;font-size:8.1px;line-height:9.72px;color:#0a0a0a;transform:scaleX(0.9400);transform-origin:100% 50%;-webkit-text-stroke:0.2px #222;">6.3467</span>
<span class="t" style="left:340.10px;top:253.04px;font-size:8.1px;line-height:9.72px;color:#0a0a0a;transform:scaleX(0.9400);transform-origin:100% 50%;-webkit-text-stroke:0.2px #222;">5</span>
<span class="t" style="left:368.29px;top:253.04px;font-size:8.1px;line-height:9.72px;color:#0a0a0a;transform:scaleX(0.9400);transform-origin:100% 50%;-webkit-text-stroke:0.2px #222;">311</span>
<span class="t" style="left:407.93px;top:253.04px;font-size:8.1px;line-height:9.72px;color:#0a0a0a;transform:scaleX(0.9400);transform-origin:100% 50%;-webkit-text-stroke:0.2px #222;">15.2</span>
<span class="t" style="left:435.63px;top:253.04px;font-size:8.1px;line-height:9.72px;color:#0a0a0a;transform:scaleX(0.9400);transform-origin:100% 50%;-webkit-text-stroke:0.2px #222;">392.52</span>
<span class="t" style="left:476.93px;top:253.04px;font-size:8.1px;line-height:9.72px;color:#0a0a0a;transform:scaleX(0.9400);transform-origin:100% 50%;-webkit-text-stroke:0.2px #222;">20.45</span>
<span class="t" style="left:524.79px;top:253.04px;font-size:8.1px;line-height:9.72px;color:#0a0a0a;transform:scaleX(0.9400);transform-origin:100% 50%;-webkit-text-stroke:0.2px #222;">15</span>
<span class="t" style="left:21.42px;top:263.64px;font-size:8.1px;line-height:9.72px;color:#0a0a0a;transform:scaleX(0.9400);transform-origin:100% 50%;-webkit-text-stroke:0.2px #222;">0.11747</span>
<span class="t" style="left:71.63px;top:263.64px;font-size:8.1px;line-height:9.72px;color:#0a0a0a;transform:scaleX(0.9400);transform-origin:100% 50%;-webkit-text-stroke:0.2px #222;">12.5</span>
<span class="t" style="left:108.23px;top:263.64px;font-size:8.1px;line-height:9.72px;color:#0a0a0a;transform:scaleX(0.9400);transform-origin:100% 50%;-webkit-text-stroke:0.2px #222;">7.87</span>
<span class="t" style="left:156.10px;top:263.64px;font-size:8.1px;line-height:9.72px;color:#0a0a0a;transform:scaleX(0.9400);transform-origin:100% 50%;-webkit-text-stroke:0.2px #222;">0</span>
<span class="t" style="left:176.73px;top:263.64px;font-size:8.1px;line-height:9.72px;color:#0a0a0a;transform:scaleX(0.9400);transform-origin:100% 50%;-webkit-text-stroke:0.2px #222;">0.524</span>
<span class="t" style="left:213.63px;top:263.64px;font-size:8.1px;line-height:9.72px;color:#0a0a0a;transform:scaleX(0.9400);transform-origin:100% 50%;-webkit-text-stroke:0.2px #222;">6.009</span>
<span class="t" style="left:254.93px;top:263.64px;font-size:8.1px;line-height:9.72px;color:#0a0a0a;transform:scaleX(0.9400);transform-origin:100% 50%;-webkit-text-stroke:0.2px #222;">82.9</span>
<span class="t" style="left:282.83px;top:263.64px;font-size:8.1px;line-height:9.72px;color:#0a0a0a;transform:scaleX(0.9400);transform-origin:100% 50%;-webkit-text-stroke:0.2px #222;">6.2267</span>
<span class="t" style="left:340.10px;top:263.64px;font-size:8.1px;line-height:9.72px;color:#0a0a0a;transform:scaleX(0.9400);transform-origin:100% 50%;-webkit-text-stroke:0.2px #222;">5</span>
<span class="t" style="left:368.29px;top:263.64px;font-size:8.1px;line-height:9.72px;color:#0a0a0a;transform:scaleX(0.9400);transform-origin:100% 50%;-webkit-text-stroke:0.2px #222;">311</span>
<span class="t" style="left:407.93px;top:263.64px;font-size:8.1px;line-height:9.72px;color:#0a0a0a;transform:scaleX(0.9400);transform-origin:100% 50%;-webkit-text-stroke:0.2px #222;">15.2</span>
<span class="t" style="left:440.13px;top:263.64px;font-size:8.1px;line-height:9.72px;color:#0a0a0a;transform:scaleX(0.9400);transform-origin:100% 50%;-webkit-text-stroke:0.2px #222;">396.9</span>
<span class="t" style="left:476.93px;top:263.64px;font-size:8.1px;line-height:9.72px;color:#0a0a0a;transform:scaleX(0.9400);transform-origin:100% 50%;-webkit-text-stroke:0.2px #222;">13.27</span>
<span class="t" style="left:518.03px;top:263.64px;font-size:8.1px;line-height:9.72px;color:#0a0a0a;transform:scaleX(0.9400);transform-origin:100% 50%;-webkit-text-stroke:0.2px #222;">18.9</span>
<span class="t" style="left:20.82px;top:274.24px;font-size:8.1px;line-height:9.72px;color:#0a0a0a;transform:scaleX(0.9400);transform-origin:100% 50%;-webkit-text-stroke:0.2px #222;">0.09378</span>
<span class="t" style="left:71.63px;top:274.24px;font-size:8.1px;line-height:9.72px;color:#0a0a0a;transform:scaleX(0.9400);transform-origin:100% 50%;-webkit-text-stroke:0.2px #222;">12.5</span>
<span class="t" style="left:108.23px;top:274.24px;font-size:8.1px;line-height:9.72px;color:#0a0a0a;transform:scaleX(0.9400);transform-origin:100% 50%;-webkit-text-stroke:0.2px #222;">7.87</span>
<span class="t" style="left:156.10px;top:274.24px;font-size:8.1px;line-height:9.72px;color:#0a0a0a;transform:scaleX(0.9400);transform-origin:100% 50%;-webkit-text-stroke:0.2px #222;">0</span>
<span class="t" style="left:176.73px;top:274.24px;font-size:8.1px;line-height:9.72px;color:#0a0a0a;transform:scaleX(0.9400);transform-origin:100% 50%;-webkit-text-stroke:0.2px #222;">0.524</span>
<span class="t" style="left:213.63px;top:274.24px;font-size:8.1px;line-height:9.72px;color:#0a0a0a;transform:scaleX(0.9400);transform-origin:100% 50%;-webkit-text-stroke:0.2px #222;">5.889</span>
<span class="t" style="left:261.69px;top:274.24px;font-size:8.1px;line-height:9.72px;color:#0a0a0a;transform:scaleX(0.9400);transform-origin:100% 50%;-webkit-text-stroke:0.2px #222;">39</span>
<span class="t" style="left:282.83px;top:274.24px;font-size:8.1px;line-height:9.72px;color:#0a0a0a;transform:scaleX(0.9400);transform-origin:100% 50%;-webkit-text-stroke:0.2px #222;">5.4509</span>
<span class="t" style="left:340.10px;top:274.24px;font-size:8.1px;line-height:9.72px;color:#0a0a0a;transform:scaleX(0.9400);transform-origin:100% 50%;-webkit-text-stroke:0.2px #222;">5</span>
<span class="t" style="left:368.29px;top:274.24px;font-size:8.1px;line-height:9.72px;color:#0a0a0a;transform:scaleX(0.9400);transform-origin:100% 50%;-webkit-text-stroke:0.2px #222;">311</span>
<span class="t" style="left:407.93px;top:274.24px;font-size:8.1px;line-height:9.72px;color:#0a0a0a;transform:scaleX(0.9400);transform-origin:100% 50%;-webkit-text-stroke:0.2px #222;">15.2</span>
<span class="t" style="left:440.13px;top:274.24px;font-size:8.1px;line-height:9.72px;color:#0a0a0a;transform:scaleX(0.9400);transform-origin:100% 50%;-webkit-text-stroke:0.2px #222;">390.5</span>
<span class="t" style="left:476.93px;top:274.24px;font-size:8.1px;line-height:9.72px;color:#0a0a0a;transform:scaleX(0.9400);transform-origin:100% 50%;-webkit-text-stroke:0.2px #222;">15.71</span>
<span class="t" style="left:518.03px;top:274.24px;font-size:8.1px;line-height:9.72px;color:#0a0a0a;transform:scaleX(0.9400);transform-origin:100% 50%;-webkit-text-stroke:0.2px #222;">21.7</span>
<span class="t" style="left:20.82px;top:284.84px;font-size:8.1px;line-height:9.72px;color:#0a0a0a;transform:scaleX(0.9400);transform-origin:100% 50%;-webkit-text-stroke:0.2px #222;">0.62976</span>
<span class="t" style="left:82.90px;top:284.84px;font-size:8.1px;line-height:9.72px;color:#0a0a0a;transform:scaleX(0.9400);transform-origin:100% 50%;-webkit-text-stroke:0.2px #222;">0</span>
<span class="t" style="left:108.23px;top:284.84px;font-size:8.1px;line-height:9.72px;color:#0a0a0a;transform:scaleX(0.9400);transform-origin:100% 50%;-webkit-text-stroke:0.2px #222;">8.14</span>
<span class="t" style="left:156.10px;top:284.84px;font-size:8.1px;line-height:9.72px;color:#0a0a0a;transform:scaleX(0.9400);transform-origin:100% 50%;-webkit-text-stroke:0.2px #222;">0</span>
<span class="t" style="left:176.73px;top:284.84px;font-size:8.1px;line-height:9.72px;color:#0a0a0a;transform:scaleX(0.9400);transform-origin:100% 50%;-webkit-text-stroke:0.2px #222;">0.538</span>
<span class="t" style="left:213.63px;top:284.84px;font-size:8.1px;line-height:9.72px;color:#0a0a0a;transform:scaleX(0.9400);transform-origin:100% 50%;-webkit-text-stroke:0.2px #222;">5.949</span>
<span class="t" style="left:254.93px;top:284.84px;font-size:8.1px;line-height:9.72px;color:#0a0a0a;transform:scaleX(0.9400);transform-origin:100% 50%;-webkit-text-stroke:0.2px #222;">61.8</span>
<span class="t" style="left:282.83px;top:284.84px;font-size:8.1px;line-height:9.72px;color:#0a0a0a;transform:scaleX(0.9400);transform-origin:100% 50%;-webkit-text-stroke:0.2px #222;">4.7075</span>
<span class="t" style="left:340.10px;top:284.84px;font-size:8.1px;line-height:9.72px;color:#0a0a0a;transform:scaleX(0.9400);transform-origin:100% 50%;-webkit-text-stroke:0.2px #222;">4</span>
<span class="t" style="left:367.69px;top:284.84px;font-size:8.1px;line-height:9.72px;color:#0a0a0a;transform:scaleX(0.9400);transform-origin:100% 50%;-webkit-text-stroke:0.2px #222;">307</span>
<span class="t" style="left:414.69px;top:284.84px;font-size:8.1px;line-height:9.72px;color:#0a0a0a;transform:scaleX(0.9400);transform-origin:100% 50%;-webkit-text-stroke:0.2px #222;">21</span>
<span class="t" style="left:440.13px;top:284.84px;font-size:8.1px;line-height:9.72px;color:#0a0a0a;transform:scaleX(0.9400);transform-origin:100% 50%;-webkit-text-stroke:0.2px #222;">396.9</span>
<span class="t" style="left:481.43px;top:284.84px;font-size:8.1px;line-height:9.72px;color:#0a0a0a;transform:scaleX(0.9400);transform-origin:100% 50%;-webkit-text-stroke:0.2px #222;">8.26</span>
<span class="t" style="left:518.03px;top:284.84px;font-size:8.1px;line-height:9.72px;color:#0a0a0a;transform:scaleX(0.9400);transform-origin:100% 50%;-webkit-text-stroke:0.2px #222;">20.4</span>
<span class="t" style="left:20.82px;top:295.44px;font-size:8.1px;line-height:9.72px;color:#0a0a0a;transform:scaleX(0.9400);transform-origin:100% 50%;-webkit-text-stroke:0.2px #222;">0.63796</span>
<span class="t" style="left:82.90px;top:295.44px;font-size:8.1px;line-height:9.72px;color:#0a0a0a;transform:scaleX(0.9400);transform-origin:100% 50%;-webkit-text-stroke:0.2px #222;">0</span>
<span class="t" style="left:108.23px;top:295.44px;font-size:8.1px;line-height:9.72px;color:#0a0a0a;transform:scaleX(0.9400);transform-origin:100% 50%;-webkit-text-stroke:0.2px #222;">8.14</span>
<span class="t" style="left:156.10px;top:295.44px;font-size:8.1px;line-height:9.72px;color:#0a0a0a;transform:scaleX(0.9400);transform-origin:100% 50%;-webkit-text-stroke:0.2px #222;">0</span>
<span class="t" style="left:176.73px;top:295.44px;font-size:8.1px;line-height:9.72px;color:#0a0a0a;transform:scaleX(0.9400);transform-origin:100% 50%;-webkit-text-stroke:0.2px #222;">0.538</span>
<span class="t" style="left:213.63px;top:295.44px;font-size:8.1px;line-height:9.72px;color:#0a0a0a;transform:scaleX(0.9400);transform-origin:100% 50%;-webkit-text-stroke:0.2px #222;">6.096</span>
<span class="t" style="left:254.93px;top:295.44px;font-size:8.1px;line-height:9.72px;color:#0a0a0a;transform:scaleX(0.9400);transform-origin:100% 50%;-webkit-text-stroke:0.2px #222;">84.5</span>
<span class="t" style="left:282.83px;top:295.44px;font-size:8.1px;line-height:9.72px;color:#0a0a0a;transform:scaleX(0.9400);transform-origin:100% 50%;-webkit-text-stroke:0.2px #222;">4.4619</span>
<span class="t" style="left:340.10px;top:295.44px;font-size:8.1px;line-height:9.72px;color:#0a0a0a;transform:scaleX(0.9400);transform-origin:100% 50%;-webkit-text-stroke:0.2px #222;">4</span>
<span class="t" style="left:367.69px;top:295.44px;font-size:8.1px;line-height:9.72px;color:#0a0a0a;transform:scaleX(0.9400);transform-origin:100% 50%;-webkit-text-stroke:0.2px #222;">307</span>
<span class="t" style="left:414.69px;top:295.44px;font-size:8.1px;line-height:9.72px;color:#0a0a0a;transform:scaleX(0.9400);transform-origin:100% 50%;-webkit-text-stroke:0.2px #222;">21</span>
<span class="t" style="left:435.63px;top:295.44px;font-size:8.1px;line-height:9.72px;color:#0a0a0a;transform:scaleX(0.9400);transform-origin:100% 50%;-webkit-text-stroke:0.2px #222;">380.02</span>
<span class="t" style="left:476.93px;top:295.44px;font-size:8.1px;line-height:9.72px;color:#0a0a0a;transform:scaleX(0.9400);transform-origin:100% 50%;-webkit-text-stroke:0.2px #222;">10.26</span>
<span class="t" style="left:518.03px;top:295.44px;font-size:8.1px;line-height:9.72px;color:#0a0a0a;transform:scaleX(0.9400);transform-origin:100% 50%;-webkit-text-stroke:0.2px #222;">18.2</span>
<span class="t" style="left:20.82px;top:306.04px;font-size:8.1px;line-height:9.72px;color:#0a0a0a;transform:scaleX(0.9400);transform-origin:100% 50%;-webkit-text-stroke:0.2px #222;">0.62739</span>
<span class="t" style="left:82.90px;top:306.04px;font-size:8.1px;line-height:9.72px;color:#0a0a0a;transform:scaleX(0.9400);transform-origin:100% 50%;-webkit-text-stroke:0.2px #222;">0</span>
<span class="t" style="left:108.23px;top:306.04px;font-size:8.1px;line-height:9.72px;color:#0a0a0a;transform:scaleX(0.9400);transform-origin:100% 50%;-webkit-text-stroke:0.2px #222;">8.14</span>
<span class="t" style="left:156.10px;top:306.04px;font-size:8.1px;line-height:9.72px;color:#0a0a0a;transform:scaleX(0.9400);transform-origin:100% 50%;-webkit-text-stroke:0.2px #222;">0</span>
<span class="t" style="left:176.73px;top:306.04px;font-size:8.1px;line-height:9.72px;color:#0a0a0a;transform:scaleX(0.9400);transform-origin:100% 50%;-webkit-text-stroke:0.2px #222;">0.538</span>
<span class="t" style="left:213.63px;top:306.04px;font-size:8.1px;line-height:9.72px;color:#0a0a0a;transform:scaleX(0.9400);transform-origin:100% 50%;-webkit-text-stroke:0.2px #222;">5.834</span>
<span class="t" style="left:254.93px;top:306.04px;font-size:8.1px;line-height:9.72px;color:#0a0a0a;transform:scaleX(0.9400);transform-origin:100% 50%;-webkit-text-stroke:0.2px #222;">56.5</span>
<span class="t" style="left:282.83px;top:306.04px;font-size:8.1px;line-height:9.72px;color:#0a0a0a;transform:scaleX(0.9400);transform-origin:100% 50%;-webkit-text-stroke:0.2px #222;">4.4986</span>
<span class="t" style="left:340.10px;top:306.04px;font-size:8.1px;line-height:9.72px;color:#0a0a0a;transform:scaleX(0.9400);transform-origin:100% 50%;-webkit-text-stroke:0.2px #222;">4</span>
<span class="t" style="left:367.69px;top:306.04px;font-size:8.1px;line-height:9.72px;color:#0a0a0a;transform:scaleX(0.9400);transform-origin:100% 50%;-webkit-text-stroke:0.2px #222;">307</span>
<span class="t" style="left:414.69px;top:306.04px;font-size:8.1px;line-height:9.72px;color:#0a0a0a;transform:scaleX(0.9400);transform-origin:100% 50%;-webkit-text-stroke:0.2px #222;">21</span>
<span class="t" style="left:435.63px;top:306.04px;font-size:8.1px;line-height:9.72px;color:#0a0a0a;transform:scaleX(0.9400);transform-origin:100% 50%;-webkit-text-stroke:0.2px #222;">395.62</span>
<span class="t" style="left:481.43px;top:306.04px;font-size:8.1px;line-height:9.72px;color:#0a0a0a;transform:scaleX(0.9400);transform-origin:100% 50%;-webkit-text-stroke:0.2px #222;">8.47</span>
<span class="t" style="left:518.03px;top:306.04px;font-size:8.1px;line-height:9.72px;color:#0a0a0a;transform:scaleX(0.9400);transform-origin:100% 50%;-webkit-text-stroke:0.2px #222;">19.9</span>
<span class="t" style="left:20.82px;top:316.64px;font-size:8.1px;line-height:9.72px;color:#0a0a0a;transform:scaleX(0.9400);transform-origin:100% 50%;-webkit-text-stroke:0.2px #222;">1.05393</span>
<span class="t" style="left:82.90px;top:316.64px;font-size:8.1px;line-height:9.72px;color:#0a0a0a;transform:scaleX(0.9400);transform-origin:100% 50%;-webkit-text-stroke:0.2px #222;">0</span>
<span class="t" style="left:108.23px;top:316.64px;font-size:8.1px;line-height:9.72px;color:#0a0a0a;transform:scaleX(0.9400);transform-origin:100% 50%;-webkit-text-stroke:0.2px #222;">8.14</span>
<span class="t" style="left:156.10px;top:316.64px;font-size:8.1px;line-height:9.72px;color:#0a0a0a;transform:scaleX(0.9400);transform-origin:100% 50%;-webkit-text-stroke:0.2px #222;">0</span>
<span class="t" style="left:176.73px;top:316.64px;font-size:8.1px;line-height:9.72px;color:#0a0a0a;transform:scaleX(0.9400);transform-origin:100% 50%;-webkit-text-stroke:0.2px #222;">0.538</span>
<span class="t" style="left:213.63px;top:316.64px;font-size:8.1px;line-height:9.72px;color:#0a0a0a;transform:scaleX(0.9400);transform-origin:100% 50%;-webkit-text-stroke:0.2px #222;">5.935</span>
<span class="t" style="left:254.93px;top:316.64px;font-size:8.1px;line-height:9.72px;color:#0a0a0a;transform:scaleX(0.9400);transform-origin:100% 50%;-webkit-text-stroke:0.2px #222;">29.3</span>
<span class="t" style="left:282.83px;top:316.64px;font-size:8.1px;line-height:9.72px;color:#0a0a0a;transform:scaleX(0.9400);transform-origin:100% 50%;-webkit-text-stroke:0.2px #222;">4.4986</span>
<span class="t" style="left:340.10px;top:316.64px;font-size:8.1px;line-height:9.72px;color:#0a0a0a;transform:scaleX(0.9400);transform-origin:100% 50%;-webkit-text-stroke:0.2px #222;">4</span>
<span class="t" style="left:367.69px;top:316.64px;font-size:8.1px;line-height:9.72px;color:#0a0a0a;transform:scaleX(0.9400);transform-origin:100% 50%;-webkit-text-stroke:0.2px #222;">307</span>
<span class="t" style="left:414.69px;top:316.64px;font-size:8.1px;line-height:9.72px;color:#0a0a0a;transform:scaleX(0.9400);transform-origin:100% 50%;-webkit-text-stroke:0.2px #222;">21</span>
<span class="t" style="left:435.63px;top:316.64px;font-size:8.1px;line-height:9.72px;color:#0a0a0a;transform:scaleX(0.9400);transform-origin:100% 50%;-webkit-text-stroke:0.2px #222;">386.85</span>
<span class="t" style="left:481.43px;top:316.64px;font-size:8.1px;line-height:9.72px;color:#0a0a0a;transform:scaleX(0.9400);transform-origin:100% 50%;-webkit-text-stroke:0.2px #222;">6.58</span>
<span class="t" style="left:518.03px;top:316.64px;font-size:8.1px;line-height:9.72px;color:#0a0a0a;transform:scaleX(0.9400);transform-origin:100% 50%;-webkit-text-stroke:0.2px #222;">23.1</span>
<span class="t" style="left:25.33px;top:327.24px;font-size:8.1px;line-height:9.72px;color:#0a0a0a;transform:scaleX(0.9400);transform-origin:100% 50%;-webkit-text-stroke:0.2px #222;">0.7842</span>
<span class="t" style="left:82.90px;top:327.24px;font-size:8.1px;line-height:9.72px;color:#0a0a0a;transform:scaleX(0.9400);transform-origin:100% 50%;-webkit-text-stroke:0.2px #222;">0</span>
<span class="t" style="left:108.23px;top:327.24px;font-size:8.1px;line-height:9.72px;color:#0a0a0a;transform:scaleX(0.9400);transform-origin:100% 50%;-webkit-text-stroke:0.2px #222;">8.14</span>
<span class="t" style="left:156.10px;top:327.24px;font-size:8.1px;line-height:9.72px;color:#0a0a0a;transform:scaleX(0.9400);transform-origin:100% 50%;-webkit-text-stroke:0.2px #222;">0</span>
<span class="t" style="left:176.73px;top:327.24px;font-size:8.1px;line-height:9.72px;color:#0a0a0a;transform:scaleX(0.9400);transform-origin:100% 50%;-webkit-text-stroke:0.2px #222;">0.538</span>
<span class="t" style="left:218.13px;top:327.24px;font-size:8.1px;line-height:9.72px;color:#0a0a0a;transform:scaleX(0.9400);transform-origin:100% 50%;-webkit-text-stroke:0.2px #222;">5.99</span>
<span class="t" style="left:254.93px;top:327.24px;font-size:8.1px;line-height:9.72px;color:#0a0a0a;transform:scaleX(0.9400);transform-origin:100% 50%;-webkit-text-stroke:0.2px #222;">81.7</span>
<span class="t" style="left:282.83px;top:327.24px;font-size:8.1px;line-height:9.72px;color:#0a0a0a;transform:scaleX(0.9400);transform-origin:100% 50%;-webkit-text-stroke:0.2px #222;">4.2579</span>
<span class="t" style="left:340.10px;top:327.24px;font-size:8.1px;line-height:9.72px;color:#0a0a0a;transform:scaleX(0.9400);transform-origin:100% 50%;-webkit-text-stroke:0.2px #222;">4</span>
<span class="t" style="left:367.69px;top:327.24px;font-size:8.1px;line-height:9.72px;color:#0a0a0a;transform:scaleX(0.9400);transform-origin:100% 50%;-webkit-text-stroke:0.2px #222;">307</span>
<span class="t" style="left:414.69px;top:327.24px;font-size:8.1px;line-height:9.72px;color:#0a0a0a;transform:scaleX(0.9400);transform-origin:100% 50%;-webkit-text-stroke:0.2px #222;">21</span>
<span class="t" style="left:435.63px;top:327.24px;font-size:8.1px;line-height:9.72px;color:#0a0a0a;transform:scaleX(0.9400);transform-origin:100% 50%;-webkit-text-stroke:0.2px #222;">386.75</span>
<span class="t" style="left:476.93px;top:327.24px;font-size:8.1px;line-height:9.72px;color:#0a0a0a;transform:scaleX(0.9400);transform-origin:100% 50%;-webkit-text-stroke:0.2px #222;">14.67</span>
<span class="t" style="left:518.03px;top:327.24px;font-size:8.1px;line-height:9.72px;color:#0a0a0a;transform:scaleX(0.9400);transform-origin:100% 50%;-webkit-text-stroke:0.2px #222;">17.5</span>
<span class="t" style="left:20.82px;top:337.84px;font-size:8.1px;line-height:9.72px;color:#0a0a0a;transform:scaleX(0.9400);transform-origin:100% 50%;-webkit-text-stroke:0.2px #222;">0.80271</span>
<span class="t" style="left:82.90px;top:337.84px;font-size:8.1px;line-height:9.72px;color:#0a0a0a;transform:scaleX(0.9400);transform-origin:100% 50%;-webkit-text-stroke:0.2px #222;">0</span>
<span class="t" style="left:108.23px;top:337.84px;font-size:8.1px;line-height:9.72px;color:#0a0a0a;transform:scaleX(0.9400);transform-origin:100% 50%;-webkit-text-stroke:0.2px #222;">8.14</span>
<span class="t" style="left:156.10px;top:337.84px;font-size:8.1px;line-height:9.72px;color:#0a0a0a;transform:scaleX(0.9400);transform-origin:100% 50%;-webkit-text-stroke:0.2px #222;">0</span>
<span class="t" style="left:176.73px;top:337.84px;font-size:8.1px;line-height:9.72px;color:#0a0a0a;transform:scaleX(0.9400);transform-origin:100% 50%;-webkit-text-stroke:0.2px #222;">0.538</span>
<span class="t" style="left:213.63px;top:337.84px;font-size:8.1px;line-height:9.72px;color:#0a0a0a;transform:scaleX(0.9400);transform-origin:100% 50%;-webkit-text-stroke:0.2px #222;">5.456</span>
<span class="t" style="left:254.93px;top:337.84px;font-size:8.1px;line-height:9.72px;color:#0a0a0a;transform:scaleX(0.9400);transform-origin:100% 50%;-webkit-text-stroke:0.2px #222;">36.6</span>
<span class="t" style="left:282.83px;top:337.84px;font-size:8.1px;line-height:9.72px;color:#0a0a0a;transform:scaleX(0.9400);transform-origin:100% 50%;-webkit-text-stroke:0.2px #222;">3.7965</span>
<span class="t" style="left:340.10px;top:337.84px;font-size:8.1px;line-height:9.72px;color:#0a0a0a;transform:scaleX(0.9400);transform-origin:100% 50%;-webkit-text-stroke:0.2px #222;">4</span>
<span class="t" style="left:367.69px;top:337.84px;font-size:8.1px;line-height:9.72px;color:#0a0a0a;transform:scaleX(0.9400);transform-origin:100% 50%;-webkit-text-stroke:0.2px #222;">307</span>
<span class="t" style="left:414.69px;top:337.84px;font-size:8.1px;line-height:9.72px;color:#0a0a0a;transform:scaleX(0.9400);transform-origin:100% 50%;-webkit-text-stroke:0.2px #222;">21</span>
<span class="t" style="left:435.63px;top:337.84px;font-size:8.1px;line-height:9.72px;color:#0a0a0a;transform:scaleX(0.9400);transform-origin:100% 50%;-webkit-text-stroke:0.2px #222;">288.99</span>
<span class="t" style="left:477.53px;top:337.84px;font-size:8.1px;line-height:9.72px;color:#0a0a0a;transform:scaleX(0.9400);transform-origin:100% 50%;-webkit-text-stroke:0.2px #222;">11.69</span>
<span class="t" style="left:518.03px;top:337.84px;font-size:8.1px;line-height:9.72px;color:#0a0a0a;transform:scaleX(0.9400);transform-origin:100% 50%;-webkit-text-stroke:0.2px #222;">20.2</span>
<span class="t" style="left:25.33px;top:348.44px;font-size:8.1px;line-height:9.72px;color:#0a0a0a;transform:scaleX(0.9400);transform-origin:100% 50%;-webkit-text-stroke:0.2px #222;">0.7258</span>
<span class="t" style="left:82.90px;top:348.44px;font-size:8.1px;line-height:9.72px;color:#0a0a0a;transform:scaleX(0.9400);transform-origin:100% 50%;-webkit-text-stroke:0.2px #222;">0</span>
<span class="t" style="left:108.23px;top:348.44px;font-size:8.1px;line-height:9.72px;color:#0a0a0a;transform:scaleX(0.9400);transform-origin:100% 50%;-webkit-text-stroke:0.2px #222;">8.14</span>
<span class="t" style="left:156.10px;top:348.44px;font-size:8.1px;line-height:9.72px;color:#0a0a0a;transform:scaleX(0.9400);transform-origin:100% 50%;-webkit-text-stroke:0.2px #222;">0</span>
<span class="t" style="left:176.73px;top:348.44px;font-size:8.1px;line-height:9.72px;color:#0a0a0a;transform:scaleX(0.9400);transform-origin:100% 50%;-webkit-text-stroke:0.2px #222;">0.538</span>
<span class="t" style="left:213.63px;top:348.44px;font-size:8.1px;line-height:9.72px;color:#0a0a0a;transform:scaleX(0.9400);transform-origin:100% 50%;-webkit-text-stroke:0.2px #222;">5.727</span>
<span class="t" style="left:254.93px;top:348.44px;font-size:8.1px;line-height:9.72px;color:#0a0a0a;transform:scaleX(0.9400);transform-origin:100% 50%;-webkit-text-stroke:0.2px #222;">69.5</span>
<span class="t" style="left:282.83px;top:348.44px;font-size:8.1px;line-height:9.72px;color:#0a0a0a;transform:scaleX(0.9400);transform-origin:100% 50%;-webkit-text-stroke:0.2px #222;">3.7965</span>
<span class="t" style="left:340.10px;top:348.44px;font-size:8.1px;line-height:9.72px;color:#0a0a0a;transform:scaleX(0.9400);transform-origin:100% 50%;-webkit-text-stroke:0.2px #222;">4</span>
<span class="t" style="left:367.69px;top:348.44px;font-size:8.1px;line-height:9.72px;color:#0a0a0a;transform:scaleX(0.9400);transform-origin:100% 50%;-webkit-text-stroke:0.2px #222;">307</span>
<span class="t" style="left:414.69px;top:348.44px;font-size:8.1px;line-height:9.72px;color:#0a0a0a;transform:scaleX(0.9400);transform-origin:100% 50%;-webkit-text-stroke:0.2px #222;">21</span>
<span class="t" style="left:435.63px;top:348.44px;font-size:8.1px;line-height:9.72px;color:#0a0a0a;transform:scaleX(0.9400);transform-origin:100% 50%;-webkit-text-stroke:0.2px #222;">390.95</span>
<span class="t" style="left:477.53px;top:348.44px;font-size:8.1px;line-height:9.72px;color:#0a0a0a;transform:scaleX(0.9400);transform-origin:100% 50%;-webkit-text-stroke:0.2px #222;">11.28</span>
<span class="t" style="left:518.03px;top:348.44px;font-size:8.1px;line-height:9.72px;color:#0a0a0a;transform:scaleX(0.9400);transform-origin:100% 50%;-webkit-text-stroke:0.2px #222;">18.2</span>
<span class="t" style="left:20.82px;top:359.04px;font-size:8.1px;line-height:9.72px;color:#0a0a0a;transform:scaleX(0.9400);transform-origin:100% 50%;-webkit-text-stroke:0.2px #222;">1.25179</span>
<span class="t" style="left:82.90px;top:359.04px;font-size:8.1px;line-height:9.72px;color:#0a0a0a;transform:scaleX(0.9400);transform-origin:100% 50%;-webkit-text-stroke:0.2px #222;">0</span>
<span class="t" style="left:108.23px;top:359.04px;font-size:8.1px;line-height:9.72px;color:#0a0a0a;transform:scaleX(0.9400);transform-origin:100% 50%;-webkit-text-stroke:0.2px #222;">8.14</span>
<span class="t" style="left:156.10px;top:359.04px;font-size:8.1px;line-height:9.72px;color:#0a0a0a;transform:scaleX(0.9400);transform-origin:100% 50%;-webkit-text-stroke:0.2px #222;">0</span>
<span class="t" style="left:176.73px;top:359.04px;font-size:8.1px;line-height:9.72px;color:#0a0a0a;transform:scaleX(0.9400);transform-origin:100% 50%;-webkit-text-stroke:0.2px #222;">0.538</span>
<span class="t" style="left:218.13px;top:359.04px;font-size:8.1px;line-height:9.72px;color:#0a0a0a;transform:scaleX(0.9400);transform-origin:100% 50%;-webkit-text-stroke:0.2px #222;">5.57</span>
<span class="t" style="left:254.93px;top:359.04px;font-size:8.1px;line-height:9.72px;color:#0a0a0a;transform:scaleX(0.9400);transform-origin:100% 50%;-webkit-text-stroke:0.2px #222;">98.1</span>
<span class="t" style="left:282.83px;top:359.04px;font-size:8.1px;line-height:9.72px;color:#0a0a0a;transform:scaleX(0.9400);transform-origin:100% 50%;-webkit-text-stroke:0.2px #222;">3.7979</span>
<span class="t" style="left:340.10px;top:359.04px;font-size:8.1px;line-height:9.72px;color:#0a0a0a;transform:scaleX(0.9400);transform-origin:100% 50%;-webkit-text-stroke:0.2px #222;">4</span>
<span class="t" style="left:367.69px;top:359.04px;font-size:8.1px;line-height:9.72px;color:#0a0a0a;transform:scaleX(0.9400);transform-origin:100% 50%;-webkit-text-stroke:0.2px #222;">307</span>
<span class="t" style="left:414.69px;top:359.04px;font-size:8.1px;line-height:9.72px;color:#0a0a0a;transform:scaleX(0.9400);transform-origin:100% 50%;-webkit-text-stroke:0.2px #222;">21</span>
<span class="t" style="left:435.63px;top:359.04px;font-size:8.1px;line-height:9.72px;color:#0a0a0a;transform:scaleX(0.9400);transform-origin:100% 50%;-webkit-text-stroke:0.2px #222;">376.57</span>
<span class="t" style="left:476.93px;top:359.04px;font-size:8.1px;line-height:9.72px;color:#0a0a0a;transform:scaleX(0.9400);transform-origin:100% 50%;-webkit-text-stroke:0.2px #222;">21.02</span>
<span class="t" style="left:518.03px;top:359.04px;font-size:8.1px;line-height:9.72px;color:#0a0a0a;transform:scaleX(0.9400);transform-origin:100% 50%;-webkit-text-stroke:0.2px #222;">13.6</span>
<span class="t" style="left:20.82px;top:369.64px;font-size:8.1px;line-height:9.72px;color:#0a0a0a;transform:scaleX(0.9400);transform-origin:100% 50%;-webkit-text-stroke:0.2px #222;">0.85204</span>
<span class="t" style="left:82.90px;top:369.64px;font-size:8.1px;line-height:9.72px;color:#0a0a0a;transform:scaleX(0.9400);transform-origin:100% 50%;-webkit-text-stroke:0.2px #222;">0</span>
<span class="t" style="left:108.23px;top:369.64px;font-size:8.1px;line-height:9.72px;color:#0a0a0a;transform:scaleX(0.9400);transform-origin:100% 50%;-webkit-text-stroke:0.2px #222;">8.14</span>
<span class="t" style="left:156.10px;top:369.64px;font-size:8.1px;line-height:9.72px;color:#0a0a0a;transform:scaleX(0.9400);transform-origin:100% 50%;-webkit-text-stroke:0.2px #222;">0</span>
<span class="t" style="left:176.73px;top:369.64px;font-size:8.1px;line-height:9.72px;color:#0a0a0a;transform:scaleX(0.9400);transform-origin:100% 50%;-webkit-text-stroke:0.2px #222;">0.538</span>
<span class="t" style="left:213.63px;top:369.64px;font-size:8.1px;line-height:9.72px;color:#0a0a0a;transform:scaleX(0.9400);transform-origin:100% 50%;-webkit-text-stroke:0.2px #222;">5.965</span>
<span class="t" style="left:254.93px;top:369.64px;font-size:8.1px;line-height:9.72px;color:#0a0a0a;transform:scaleX(0.9400);transform-origin:100% 50%;-webkit-text-stroke:0.2px #222;">89.2</span>
<span class="t" style="left:282.83px;top:369.64px;font-size:8.1px;line-height:9.72px;color:#0a0a0a;transform:scaleX(0.9400);transform-origin:100% 50%;-webkit-text-stroke:0.2px #222;">4.0123</span>
<span class="t" style="left:340.10px;top:369.64px;font-size:8.1px;line-height:9.72px;color:#0a0a0a;transform:scaleX(0.9400);transform-origin:100% 50%;-webkit-text-stroke:0.2px #222;">4</span>
<span class="t" style="left:367.69px;top:369.64px;font-size:8.1px;line-height:9.72px;color:#0a0a0a;transform:scaleX(0.9400);transform-origin:100% 50%;-webkit-text-stroke:0.2px #222;">307</span>
<span class="t" style="left:414.69px;top:369.64px;font-size:8.1px;line-height:9.72px;color:#0a0a0a;transform:scaleX(0.9400);transform-origin:100% 50%;-webkit-text-stroke:0.2px #222;">21</span>
<span class="t" style="left:435.63px;top:369.64px;font-size:8.1px;line-height:9.72px;color:#0a0a0a;transform:scaleX(0.9400);transform-origin:100% 50%;-webkit-text-stroke:0.2px #222;">392.53</span>
<span class="t" style="left:476.93px;top:369.64px;font-size:8.1px;line-height:9.72px;color:#0a0a0a;transform:scaleX(0.9400);transform-origin:100% 50%;-webkit-text-stroke:0.2px #222;">13.83</span>
<span class="t" style="left:518.03px;top:369.64px;font-size:8.1px;line-height:9.72px;color:#0a0a0a;transform:scaleX(0.9400);transform-origin:100% 50%;-webkit-text-stroke:0.2px #222;">19.6</span>
<span class="t" style="left:20.82px;top:380.24px;font-size:8.1px;line-height:9.72px;color:#0a0a0a;transform:scaleX(0.9400);transform-origin:100% 50%;-webkit-text-stroke:0.2px #222;">1.23247</span>
<span class="t" style="left:82.90px;top:380.24px;font-size:8.1px;line-height:9.72px;color:#0a0a0a;transform:scaleX(0.9400);transform-origin:100% 50%;-webkit-text-stroke:0.2px #222;">0</span>
<span class="t" style="left:108.23px;top:380.24px;font-size:8.1px;line-height:9.72px;color:#0a0a0a;transform:scaleX(0.9400);transform-origin:100% 50%;-webkit-text-stroke:0.2px #222;">8.14</span>
<span class="t" style="left:156.10px;top:380.24px;font-size:8.1px;line-height:9.72px;color:#0a0a0a;transform:scaleX(0.9400);transform-origin:100% 50%;-webkit-text-stroke:0.2px #222;">0</span>
<span class="t" style="left:176.73px;top:380.24px;font-size:8.1px;line-height:9.72px;color:#0a0a0a;transform:scaleX(0.9400);transform-origin:100% 50%;-webkit-text-stroke:0.2px #222;">0.538</span>
<span class="t" style="left:213.63px;top:380.24px;font-size:8.1px;line-height:9.72px;color:#0a0a0a;transform:scaleX(0.9400);transform-origin:100% 50%;-webkit-text-stroke:0.2px #222;">6.142</span>
<span class="t" style="left:254.93px;top:380.24px;font-size:8.1px;line-height:9.72px;color:#0a0a0a;transform:scaleX(0.9400);transform-origin:100% 50%;-webkit-text-stroke:0.2px #222;">91.7</span>
<span class="t" style="left:282.83px;top:380.24px;font-size:8.1px;line-height:9.72px;color:#0a0a0a;transform:scaleX(0.9400);transform-origin:100% 50%;-webkit-text-stroke:0.2px #222;">3.9769</span>
<span class="t" style="left:340.10px;top:380.24px;font-size:8.1px;line-height:9.72px;color:#0a0a0a;transform:scaleX(0.9400);transform-origin:100% 50%;-webkit-text-stroke:0.2px #222;">4</span>
<span class="t" style="left:367.69px;top:380.24px;font-size:8.1px;line-height:9.72px;color:#0a0a0a;transform:scaleX(0.9400);transform-origin:100% 50%;-webkit-text-stroke:0.2px #222;">307</span>
<span class="t" style="left:414.69px;top:380.24px;font-size:8.1px;line-height:9.72px;color:#0a0a0a;transform:scaleX(0.9400);transform-origin:100% 50%;-webkit-text-stroke:0.2px #222;">21</span>
<span class="t" style="left:440.13px;top:380.24px;font-size:8.1px;line-height:9.72px;color:#0a0a0a;transform:scaleX(0.9400);transform-origin:100% 50%;-webkit-text-stroke:0.2px #222;">396.9</span>
<span class="t" style="left:476.93px;top:380.24px;font-size:8.1px;line-height:9.72px;color:#0a0a0a;transform:scaleX(0.9400);transform-origin:100% 50%;-webkit-text-stroke:0.2px #222;">18.72</span>
<span class="t" style="left:518.03px;top:380.24px;font-size:8.1px;line-height:9.72px;color:#0a0a0a;transform:scaleX(0.9400);transform-origin:100% 50%;-webkit-text-stroke:0.2px #222;">15.2</span>
<span class="t" style="left:20.82px;top:390.84px;font-size:8.1px;line-height:9.72px;color:#0a0a0a;transform:scaleX(0.9400);transform-origin:100% 50%;-webkit-text-stroke:0.2px #222;">0.98843</span>
<span class="t" style="left:82.90px;top:390.84px;font-size:8.1px;line-height:9.72px;color:#0a0a0a;transform:scaleX(0.9400);transform-origin:100% 50%;-webkit-text-stroke:0.2px #222;">0</span>
<span class="t" style="left:108.23px;top:390.84px;font-size:8.1px;line-height:9.72px;color:#0a0a0a;transform:scaleX(0.9400);transform-origin:100% 50%;-webkit-text-stroke:0.2px #222;">8.14</span>
<span class="t" style="left:156.10px;top:390.84px;font-size:8.1px;line-height:9.72px;color:#0a0a0a;transform:scaleX(0.9400);transform-origin:100% 50%;-webkit-text-stroke:0.2px #222;">0</span>
<span class="t" style="left:176.73px;top:390.84px;font-size:8.1px;line-height:9.72px;color:#0a0a0a;transform:scaleX(0.9400);transform-origin:100% 50%;-webkit-text-stroke:0.2px #222;">0.538</span>
<span class="t" style="left:213.63px;top:390.84px;font-size:8.1px;line-height:9.72px;color:#0a0a0a;transform:scaleX(0.9400);transform-origin:100% 50%;-webkit-text-stroke:0.2px #222;">5.813</span>
<span class="t" style="left:257.19px;top:390.84px;font-size:8.1px;line-height:9.72px;color:#0a0a0a;transform:scaleX(0.9400);transform-origin:100% 50%;-webkit-text-stroke:0.2px #222;">100</span>
<span class="t" style="left:282.83px;top:390.84px;font-size:8.1px;line-height:9.72px;color:#0a0a0a;transform:scaleX(0.9400);transform-origin:100% 50%;-webkit-text-stroke:0.2px #222;">4.0952</span>
<span class="t" style="left:340.10px;top:390.84px;font-size:8.1px;line-height:9.72px;color:#0a0a0a;transform:scaleX(0.9400);transform-origin:100% 50%;-webkit-text-stroke:0.2px #222;">4</span>
<span class="t" style="left:367.69px;top:390.84px;font-size:8.1px;line-height:9.72px;color:#0a0a0a;transform:scaleX(0.9400);transform-origin:100% 50%;-webkit-text-stroke:0.2px #222;">307</span>
<span class="t" style="left:414.69px;top:390.84px;font-size:8.1px;line-height:9.72px;color:#0a0a0a;transform:scaleX(0.9400);transform-origin:100% 50%;-webkit-text-stroke:0.2px #222;">21</span>
<span class="t" style="left:435.63px;top:390.84px;font-size:8.1px;line-height:9.72px;color:#0a0a0a;transform:scaleX(0.9400);transform-origin:100% 50%;-webkit-text-stroke:0.2px #222;">394.54</span>
<span class="t" style="left:476.93px;top:390.84px;font-size:8.1px;line-height:9.72px;color:#0a0a0a;transform:scaleX(0.9400);transform-origin:100% 50%;-webkit-text-stroke:0.2px #222;">19.88</span>
<span class="t" style="left:518.03px;top:390.84px;font-size:8.1px;line-height:9.72px;color:#0a0a0a;transform:scaleX(0.9400);transform-origin:100% 50%;-webkit-text-stroke:0.2px #222;">14.5</span>
<span class="t" style="left:20.82px;top:401.44px;font-size:8.1px;line-height:9.72px;color:#0a0a0a;transform:scaleX(0.9400);transform-origin:100% 50%;-webkit-text-stroke:0.2px #222;">0.75026</span>
<span class="t" style="left:82.90px;top:401.44px;font-size:8.1px;line-height:9.72px;color:#0a0a0a;transform:scaleX(0.9400);transform-origin:100% 50%;-webkit-text-stroke:0.2px #222;">0</span>
<span class="t" style="left:108.23px;top:401.44px;font-size:8.1px;line-height:9.72px;color:#0a0a0a;transform:scaleX(0.9400);transform-origin:100% 50%;-webkit-text-stroke:0.2px #222;">8.14</span>
<span class="t" style="left:156.10px;top:401.44px;font-size:8.1px;line-height:9.72px;color:#0a0a0a;transform:scaleX(0.9400);transform-origin:100% 50%;-webkit-text-stroke:0.2px #222;">0</span>
<span class="t" style="left:176.73px;top:401.44px;font-size:8.1px;line-height:9.72px;color:#0a0a0a;transform:scaleX(0.9400);transform-origin:100% 50%;-webkit-text-stroke:0.2px #222;">0.538</span>
<span class="t" style="left:213.63px;top:401.44px;font-size:8.1px;line-height:9.72px;color:#0a0a0a;transform:scaleX(0.9400);transform-origin:100% 50%;-webkit-text-stroke:0.2px #222;">5.924</span>
<span class="t" style="left:254.93px;top:401.44px;font-size:8.1px;line-height:9.72px;color:#0a0a0a;transform:scaleX(0.9400);transform-origin:100% 50%;-webkit-text-stroke:0.2px #222;">94.1</span>
<span class="t" style="left:282.83px;top:401.44px;font-size:8.1px;line-height:9.72px;color:#0a0a0a;transform:scaleX(0.9400);transform-origin:100% 50%;-webkit-text-stroke:0.2px #222;">4.3996</span>
<span class="t" style="left:340.10px;top:401.44px;font-size:8.1px;line-height:9.72px;color:#0a0a0a;transform:scaleX(0.9400);transform-origin:100% 50%;-webkit-text-stroke:0.2px #222;">4</span>
<span class="t" style="left:367.69px;top:401.44px;font-size:8.1px;line-height:9.72px;color:#0a0a0a;transform:scaleX(0.9400);transform-origin:100% 50%;-webkit-text-stroke:0.2px #222;">307</span>
<span class="t" style="left:414.69px;top:401.44px;font-size:8.1px;line-height:9.72px;color:#0a0a0a;transform:scaleX(0.9400);transform-origin:100% 50%;-webkit-text-stroke:0.2px #222;">21</span>
<span class="t" style="left:435.63px;top:401.44px;font-size:8.1px;line-height:9.72px;color:#0a0a0a;transform:scaleX(0.9400);transform-origin:100% 50%;-webkit-text-stroke:0.2px #222;">394.33</span>
<span class="t" style="left:481.43px;top:401.44px;font-size:8.1px;line-height:9.72px;color:#0a0a0a;transform:scaleX(0.9400);transform-origin:100% 50%;-webkit-text-stroke:0.2px #222;">16.3</span>
<span class="t" style="left:518.03px;top:401.44px;font-size:8.1px;line-height:9.72px;color:#0a0a0a;transform:scaleX(0.9400);transform-origin:100% 50%;-webkit-text-stroke:0.2px #222;">15.6</span>
<span class="t" style="left:20.82px;top:412.04px;font-size:8.1px;line-height:9.72px;color:#0a0a0a;transform:scaleX(0.9400);transform-origin:100% 50%;-webkit-text-stroke:0.2px #222;">0.84054</span>
<span class="t" style="left:82.90px;top:412.04px;font-size:8.1px;line-height:9.72px;color:#0a0a0a;transform:scaleX(0.9400);transform-origin:100% 50%;-webkit-text-stroke:0.2px #222;">0</span>
<span class="t" style="left:108.23px;top:412.04px;font-size:8.1px;line-height:9.72px;color:#0a0a0a;transform:scaleX(0.9400);transform-origin:100% 50%;-webkit-text-stroke:0.2px #222;">8.14</span>
<span class="t" style="left:156.10px;top:412.04px;font-size:8.1px;line-height:9.72px;color:#0a0a0a;transform:scaleX(0.9400);transform-origin:100% 50%;-webkit-text-stroke:0.2px #222;">0</span>
<span class="t" style="left:176.73px;top:412.04px;font-size:8.1px;line-height:9.72px;color:#0a0a0a;transform:scaleX(0.9400);transform-origin:100% 50%;-webkit-text-stroke:0.2px #222;">0.538</span>
<span class="t" style="left:213.63px;top:412.04px;font-size:8.1px;line-height:9.72px;color:#0a0a0a;transform:scaleX(0.9400);transform-origin:100% 50%;-webkit-text-stroke:0.2px #222;">5.599</span>
<span class="t" style="left:254.93px;top:412.04px;font-size:8.1px;line-height:9.72px;color:#0a0a0a;transform:scaleX(0.9400);transform-origin:100% 50%;-webkit-text-stroke:0.2px #222;">85.7</span>
<span class="t" style="left:282.83px;top:412.04px;font-size:8.1px;line-height:9.72px;color:#0a0a0a;transform:scaleX(0.9400);transform-origin:100% 50%;-webkit-text-stroke:0.2px #222;">4.4546</span>
<span class="t" style="left:340.10px;top:412.04px;font-size:8.1px;line-height:9.72px;color:#0a0a0a;transform:scaleX(0.9400);transform-origin:100% 50%;-webkit-text-stroke:0.2px #222;">4</span>
<span class="t" style="left:367.69px;top:412.04px;font-size:8.1px;line-height:9.72px;color:#0a0a0a;transform:scaleX(0.9400);transform-origin:100% 50%;-webkit-text-stroke:0.2px #222;">307</span>
<span class="t" style="left:414.69px;top:412.04px;font-size:8.1px;line-height:9.72px;color:#0a0a0a;transform:scaleX(0.9400);transform-origin:100% 50%;-webkit-text-stroke:0.2px #222;">21</span>
<span class="t" style="left:435.63px;top:412.04px;font-size:8.1px;line-height:9.72px;color:#0a0a0a;transform:scaleX(0.9400);transform-origin:100% 50%;-webkit-text-stroke:0.2px #222;">303.42</span>
<span class="t" style="left:476.93px;top:412.04px;font-size:8.1px;line-height:9.72px;color:#0a0a0a;transform:scaleX(0.9400);transform-origin:100% 50%;-webkit-text-stroke:0.2px #222;">16.51</span>
<span class="t" style="left:518.03px;top:412.04px;font-size:8.1px;line-height:9.72px;color:#0a0a0a;transform:scaleX(0.9400);transform-origin:100% 50%;-webkit-text-stroke:0.2px #222;">13.9</span>
<div class="b" style="left:837.40px;top:118.00px;width:12.60px;height:303.00px;background:#f1f1f1;"></div>
<div class="b" style="left:839.00px;top:118.20px;width:9.40px;height:9.40px;background:#fff;border:1px solid #bdbdbd;"></div>
<div class="b" style="left:839.00px;top:127.40px;width:9.40px;height:14.40px;background:#fff;border:1px solid #bdbdbd;"></div>
<div class="b" style="left:839.00px;top:412.60px;width:9.40px;height:8.60px;background:#fff;border:1px solid #bdbdbd;"></div>
<svg style="left:838px;top:112px" width="11" height="310" viewBox="838 112 11 310"><path d="M841.6 124 L845.8 124 L843.7 121.4 Z" fill="#555"/><path d="M841.6 415.8 L845.8 415.8 L843.7 418.4 Z" fill="#555"/></svg>
<div class="b" style="left:0.00px;top:421.40px;width:850.00px;height:18.60px;background:#f3f3f3;border-top:1px solid #c9c9c9;"></div>
<svg style="left:0;top:437px" width="850" height="3" viewBox="0 437 850 3"><rect x="0" y="438.4" width="850" height="2" fill="#217346"/></svg>
<svg style="left:10px;top:424px" width="35" height="12" viewBox="10 424 35 12"><path d="M18.8 427.2 L18.8 432.2 L16 429.7 Z" fill="#c9c9c9"/><path d="M34 427 L34 432.4 L37 429.7 Z" fill="#217346"/></svg>
<div class="b" style="left:62.00px;top:421.40px;width:33.00px;height:15.60px;background:#fff;border-bottom:1.4px solid #217346;"></div>
<span class="t" style="left:69.28px;top:424.24px;font-size:8.6px;line-height:10.32px;color:#217346;font-weight:700;transform:scaleX(0.9335);transform-origin:50% 50%;">Data</span>
<span class="t" style="left:105.00px;top:424.24px;font-size:8.6px;line-height:10.32px;color:#3a3a3a;transform:scaleX(0.9083);transform-origin:0 50%;">Data_Partition</span>
<span class="t" style="left:173.80px;top:424.24px;font-size:8.6px;line-height:10.32px;color:#3a3a3a;transform:scaleX(0.8860);transform-origin:0 50%;">MLR_Output</span>
<span class="t" style="left:236.00px;top:424.24px;font-size:8.6px;line-height:10.32px;color:#3a3a3a;transform:scaleX(0.9060);transform-origin:0 50%;">MLR_TrainingScore</span>
<span class="t" style="left:324.00px;top:424.24px;font-size:8.6px;line-height:10.32px;color:#3a3a3a;transform:scaleX(0.9208);transform-origin:0 50%;">MLR_ValidationScore</span>
<span class="t" style="left:421.00px;top:424.24px;font-size:8.6px;line-height:10.32px;color:#3a3a3a;transform:scaleX(0.9107);transform-origin:0 50%;">MLR_TrainingLiftChart</span>
<span class="t" style="left:522.00px;top:424.24px;font-size:8.6px;line-height:10.32px;color:#3a3a3a;transform:scaleX(0.9236);transform-origin:0 50%;">MLR_ValidationLiftChart</span>
<div class="b" style="left:164.50px;top:424.00px;width:1.00px;height:11.00px;background:#c6c6c6;"></div>
<div class="b" style="left:227.00px;top:424.00px;width:1.00px;height:11.00px;background:#c6c6c6;"></div>
<div class="b" style="left:314.50px;top:424.00px;width:1.00px;height:11.00px;background:#c6c6c6;"></div>
<div class="b" style="left:410.00px;top:424.00px;width:1.00px;height:11.00px;background:#c6c6c6;"></div>
<div class="b" style="left:511.00px;top:424.00px;width:1.00px;height:11.00px;background:#c6c6c6;"></div>
<div class="b" style="left:619.40px;top:424.00px;width:1.00px;height:11.00px;background:#c6c6c6;"></div>
<span class="t" style="left:626.45px;top:424.60px;font-size:9px;line-height:10.8px;color:#217346;font-weight:700;">...</span>
<svg style="left:640px;top:423px" width="30" height="14" viewBox="640 423 30 14"><circle cx="646.6" cy="429.8" r="4.3" fill="#fff" stroke="#7a7a7a" stroke-width="0.9"/><path d="M644.2 429.8 L649 429.8 M646.6 427.4 L646.6 432.2" stroke="#666" stroke-width="1"/><circle cx="664.7" cy="427.4" r="0.6" fill="#bbb"/><circle cx="664.7" cy="429.8" r="0.6" fill="#bbb"/><circle cx="664.7" cy="432.2" r="0.6" fill="#bbb"/></svg>
<div class="b" style="left:675.20px;top:425.60px;width:9.00px;height:9.20px;background:#fff;border:1px solid #c6c6c6;"></div>
<div class="b" style="left:684.20px;top:425.60px;width:135.00px;height:9.20px;background:#fff;border:1px solid #c6c6c6;"></div>
<div class="b" style="left:826.00px;top:425.60px;width:9.00px;height:9.20px;background:#fff;border:1px solid #c6c6c6;"></div>
<svg style="left:675px;top:425px" width="162" height="11" viewBox="675 425 162 11"><path d="M681.2 428 L681.2 432.4 L678.4 430.2 Z" fill="#444"/><path d="M829.4 428 L829.4 432.4 L832.2 430.2 Z" fill="#444"/></svg>
<div class="b" style="left:65.00px;top:75.80px;width:139.20px;height:112.00px;background:#fff;border:1px solid #c6c6c6;box-shadow:1.5px 1.5px 3px rgba(0,0,0,0.22);"></div>
<div class="b" style="left:66.40px;top:76.80px;width:137.00px;height:26.80px;background:#9fd5b7;"></div>
<svg style="left:66px;top:76px" width="138" height="112" viewBox="66 76 138 112"><rect x="70.4" y="81.2" width="17.6" height="15.6" fill="#f0f4fb" stroke="#7d93c4" stroke-width="0.7"/><rect x="70.4" y="81.2" width="17.6" height="2.8" fill="#5a6fc0"/><path d="M71.4 82.60 L87.0 82.60" stroke="#a9b8e2" stroke-width="0.7" stroke-dasharray="1.4 0.7"/><path d="M76.27 81.2 L76.27 96.8" stroke="#aabbdc" stroke-width="0.6"/><path d="M82.13 81.2 L82.13 96.8" stroke="#aabbdc" stroke-width="0.6"/><path d="M70.4 87.20 L88.0 87.20" stroke="#aabbdc" stroke-width="0.6"/><path d="M70.4 90.40 L88.0 90.40" stroke="#aabbdc" stroke-width="0.6"/><path d="M70.4 93.60 L88.0 93.60" stroke="#aabbdc" stroke-width="0.6"/><g transform="translate(71.3 83.0) scale(1.0)"><path d="M13.6 5.6 L7 12.2" stroke="#8a8a8a" stroke-width="3" stroke-linecap="round"/><path d="M13.6 5.6 L7 12.2" stroke="#f4f4f4" stroke-width="1.9" stroke-linecap="round"/><path d="M7.4 11.8 L3.6 15.8" stroke="#222" stroke-width="2.8" stroke-linecap="round"/><path d="M6 6.4 L14.6 15.4" stroke="#777" stroke-width="3.4" stroke-linecap="round"/><path d="M6 6.4 L14.6 15.4" stroke="#f1f1f1" stroke-width="2.2" stroke-linecap="round"/><circle cx="5.4" cy="5.8" r="2.5" fill="#f1f1f1" stroke="#777" stroke-width="0.7"/><path d="M3.2 3.4 L5.6 5.8" stroke="#dfe6f3" stroke-width="1.6"/><circle cx="15.6" cy="7.6" r="1.7" fill="#f4f4f4" stroke="#888" stroke-width="0.6"/><circle cx="12.6" cy="4.4" r="1.6" fill="#f4f4f4" stroke="#888" stroke-width="0.6"/></g><rect x="70.4" y="108.2" width="17.6" height="15.6" fill="#f0f4fb" stroke="#7d93c4" stroke-width="0.7"/><rect x="70.4" y="108.2" width="17.6" height="2.8" fill="#5a6fc0"/><path d="M71.4 109.60 L87.0 109.60" stroke="#a9b8e2" stroke-width="0.7" stroke-dasharray="1.4 0.7"/><path d="M76.27 108.2 L76.27 123.8" stroke="#aabbdc" stroke-width="0.6"/><path d="M82.13 108.2 L82.13 123.8" stroke="#aabbdc" stroke-width="0.6"/><path d="M70.4 114.20 L88.0 114.20" stroke="#aabbdc" stroke-width="0.6"/><path d="M70.4 117.40 L88.0 117.40" stroke="#aabbdc" stroke-width="0.6"/><path d="M70.4 120.60 L88.0 120.60" stroke="#aabbdc" stroke-width="0.6"/><g transform="translate(71.3 110.0) scale(1.0)"><path d="M13.6 5.6 L7 12.2" stroke="#8a8a8a" stroke-width="3" stroke-linecap="round"/><path d="M13.6 5.6 L7 12.2" stroke="#f4f4f4" stroke-width="1.9" stroke-linecap="round"/><path d="M7.4 11.8 L3.6 15.8" stroke="#222" stroke-width="2.8" stroke-linecap="round"/><path d="M6 6.4 L14.6 15.4" stroke="#777" stroke-width="3.4" stroke-linecap="round"/><path d="M6 6.4 L14.6 15.4" stroke="#f1f1f1" stroke-width="2.2" stroke-linecap="round"/><circle cx="5.4" cy="5.8" r="2.5" fill="#f1f1f1" stroke="#777" stroke-width="0.7"/><path d="M3.2 3.4 L5.6 5.8" stroke="#dfe6f3" stroke-width="1.6"/><circle cx="15.6" cy="7.6" r="1.7" fill="#f4f4f4" stroke="#888" stroke-width="0.6"/><circle cx="12.6" cy="4.4" r="1.6" fill="#f4f4f4" stroke="#888" stroke-width="0.6"/></g><rect x="70.4" y="135.4" width="17.6" height="15.6" fill="#f0f4fb" stroke="#7d93c4" stroke-width="0.7"/><rect x="70.4" y="135.4" width="17.6" height="2.8" fill="#5a6fc0"/><path d="M71.4 136.80 L87.0 136.80" stroke="#a9b8e2" stroke-width="0.7" stroke-dasharray="1.4 0.7"/><path d="M76.27 135.4 L76.27 151.0" stroke="#aabbdc" stroke-width="0.6"/><path d="M82.13 135.4 L82.13 151.0" stroke="#aabbdc" stroke-width="0.6"/><path d="M70.4 141.40 L88.0 141.40" stroke="#aabbdc" stroke-width="0.6"/><path d="M70.4 144.60 L88.0 144.60" stroke="#aabbdc" stroke-width="0.6"/><path d="M70.4 147.80 L88.0 147.80" stroke="#aabbdc" stroke-width="0.6"/><g transform="translate(71.3 137.2) scale(1.0)"><path d="M13.6 5.6 L7 12.2" stroke="#8a8a8a" stroke-width="3" stroke-linecap="round"/><path d="M13.6 5.6 L7 12.2" stroke="#f4f4f4" stroke-width="1.9" stroke-linecap="round"/><path d="M7.4 11.8 L3.6 15.8" stroke="#222" stroke-width="2.8" stroke-linecap="round"/><path d="M6 6.4 L14.6 15.4" stroke="#777" stroke-width="3.4" stroke-linecap="round"/><path d="M6 6.4 L14.6 15.4" stroke="#f1f1f1" stroke-width="2.2" stroke-linecap="round"/><circle cx="5.4" cy="5.8" r="2.5" fill="#f1f1f1" stroke="#777" stroke-width="0.7"/><path d="M3.2 3.4 L5.6 5.8" stroke="#dfe6f3" stroke-width="1.6"/><circle cx="15.6" cy="7.6" r="1.7" fill="#f4f4f4" stroke="#888" stroke-width="0.6"/><circle cx="12.6" cy="4.4" r="1.6" fill="#f4f4f4" stroke="#888" stroke-width="0.6"/></g><rect x="70.4" y="163.0" width="17.6" height="15.6" fill="#f0f4fb" stroke="#7d93c4" stroke-width="0.7"/><rect x="70.4" y="163.0" width="17.6" height="2.8" fill="#5a6fc0"/><path d="M71.4 164.40 L87.0 164.40" stroke="#a9b8e2" stroke-width="0.7" stroke-dasharray="1.4 0.7"/><path d="M76.27 163.0 L76.27 178.6" stroke="#aabbdc" stroke-width="0.6"/><path d="M82.13 163.0 L82.13 178.6" stroke="#aabbdc" stroke-width="0.6"/><path d="M70.4 169.00 L88.0 169.00" stroke="#aabbdc" stroke-width="0.6"/><path d="M70.4 172.20 L88.0 172.20" stroke="#aabbdc" stroke-width="0.6"/><path d="M70.4 175.40 L88.0 175.40" stroke="#aabbdc" stroke-width="0.6"/><g transform="translate(71.3 164.8) scale(1.0)"><path d="M13.6 5.6 L7 12.2" stroke="#8a8a8a" stroke-width="3" stroke-linecap="round"/><path d="M13.6 5.6 L7 12.2" stroke="#f4f4f4" stroke-width="1.9" stroke-linecap="round"/><path d="M7.4 11.8 L3.6 15.8" stroke="#222" stroke-width="2.8" stroke-linecap="round"/><path d="M6 6.4 L14.6 15.4" stroke="#777" stroke-width="3.4" stroke-linecap="round"/><path d="M6 6.4 L14.6 15.4" stroke="#f1f1f1" stroke-width="2.2" stroke-linecap="round"/><circle cx="5.4" cy="5.8" r="2.5" fill="#f1f1f1" stroke="#777" stroke-width="0.7"/><path d="M3.2 3.4 L5.6 5.8" stroke="#dfe6f3" stroke-width="1.6"/><circle cx="15.6" cy="7.6" r="1.7" fill="#f4f4f4" stroke="#888" stroke-width="0.6"/><circle cx="12.6" cy="4.4" r="1.6" fill="#f4f4f4" stroke="#888" stroke-width="0.6"/></g><path d="M195.6 142.6 L198 144.6 L195.6 146.6 Z" fill="#555"/></svg>
<span class="t" style="left:94.80px;top:85.12px;font-size:8.8px;line-height:10.56px;color:#454545;font-weight:700;transform:scaleX(0.8012);transform-origin:0 50%;">Missing Data Handling</span>
<span class="t" style="left:94.80px;top:112.12px;font-size:8.8px;line-height:10.56px;color:#454545;font-weight:700;transform:scaleX(0.7998);transform-origin:0 50%;">Bin Continuous Data</span>
<span class="t" style="left:94.80px;top:139.32px;font-size:8.8px;line-height:10.56px;color:#454545;font-weight:700;transform:scaleX(0.8214);transform-origin:0 50%;">Transform Categorical Data</span>
<span class="t" style="left:94.80px;top:166.92px;font-size:8.8px;line-height:10.56px;color:#454545;font-weight:700;transform:scaleX(0.8031);transform-origin:0 50%;">Principal Components</span>
</div></body></html>
